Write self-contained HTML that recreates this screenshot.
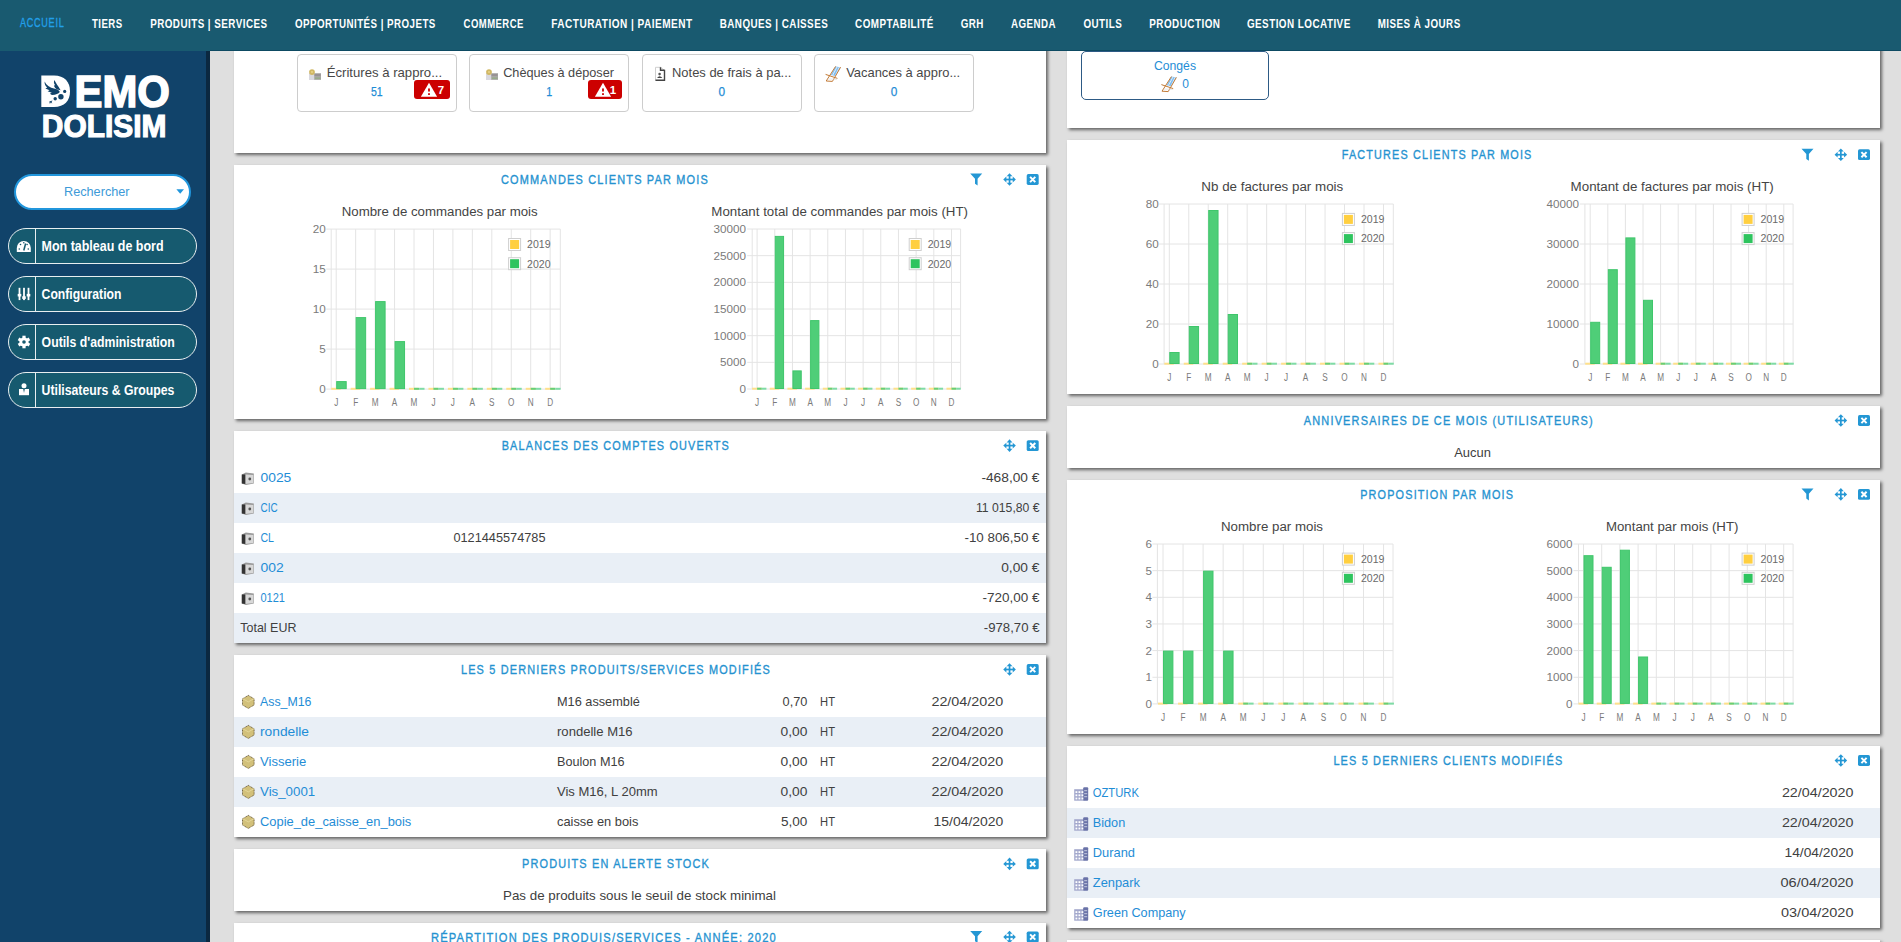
<!DOCTYPE html>
<html><head><meta charset="utf-8"><title>Dolibarr - Accueil</title>
<style>
html,body{margin:0;padding:0;}
body{width:1901px;height:942px;overflow:hidden;position:relative;background:#dfdfdf;font-family:"Liberation Sans", sans-serif;}
svg{position:absolute;left:0;top:0;z-index:10;}
svg text{font-family:"Liberation Sans", sans-serif;}
</style></head><body>
<div style="position:absolute;left:0px;top:0px;width:1901px;height:51px;box-sizing:border-box;background:#195a70;z-index:5;"></div><div style="position:absolute;left:210px;top:50px;width:1691px;height:1px;box-sizing:border-box;background:#0d4a62;z-index:5;"></div><div style="position:absolute;left:0px;top:51px;width:206px;height:891px;box-sizing:border-box;background:#11436a;"></div><div style="position:absolute;left:206px;top:51px;width:4px;height:891px;box-sizing:border-box;background:#0b2840;"></div>
<div style="position:absolute;left:14px;top:174px;width:177px;height:36px;box-sizing:border-box;border:2.5px solid #2196dc;border-radius:18px;background:#fff;"></div><div style="position:absolute;left:8px;top:228px;width:189px;height:36px;box-sizing:border-box;border:1.2px solid #e8eef0;border-radius:18px;background:#165a6f;"></div><div style="position:absolute;left:34.8px;top:229px;width:1.4px;height:34px;box-sizing:border-box;background:#e8eef0;"></div><div style="position:absolute;left:8px;top:276px;width:189px;height:36px;box-sizing:border-box;border:1.2px solid #e8eef0;border-radius:18px;background:#165a6f;"></div><div style="position:absolute;left:34.8px;top:277px;width:1.4px;height:34px;box-sizing:border-box;background:#e8eef0;"></div><div style="position:absolute;left:8px;top:324px;width:189px;height:36px;box-sizing:border-box;border:1.2px solid #e8eef0;border-radius:18px;background:#165a6f;"></div><div style="position:absolute;left:34.8px;top:325px;width:1.4px;height:34px;box-sizing:border-box;background:#e8eef0;"></div><div style="position:absolute;left:8px;top:372px;width:189px;height:36px;box-sizing:border-box;border:1.2px solid #e8eef0;border-radius:18px;background:#165a6f;"></div><div style="position:absolute;left:34.8px;top:373px;width:1.4px;height:34px;box-sizing:border-box;background:#e8eef0;"></div><div style="position:absolute;left:234px;top:-10px;width:812px;height:163px;box-sizing:border-box;background:#fff;box-shadow:2px 2px 3px rgba(0,0,0,0.55);"></div><div style="position:absolute;left:234px;top:165px;width:812px;height:254px;box-sizing:border-box;background:#fff;box-shadow:2px 2px 3px rgba(0,0,0,0.55);"></div><div style="position:absolute;left:234px;top:431px;width:812px;height:212px;box-sizing:border-box;background:#fff;box-shadow:2px 2px 3px rgba(0,0,0,0.55);"></div><div style="position:absolute;left:234px;top:655px;width:812px;height:182px;box-sizing:border-box;background:#fff;box-shadow:2px 2px 3px rgba(0,0,0,0.55);"></div><div style="position:absolute;left:234px;top:849px;width:812px;height:62px;box-sizing:border-box;background:#fff;box-shadow:2px 2px 3px rgba(0,0,0,0.55);"></div><div style="position:absolute;left:234px;top:923px;width:812px;height:40px;box-sizing:border-box;background:#fff;box-shadow:2px 2px 3px rgba(0,0,0,0.55);"></div><div style="position:absolute;left:1067px;top:-10px;width:813px;height:138px;box-sizing:border-box;background:#fff;box-shadow:2px 2px 3px rgba(0,0,0,0.55);"></div><div style="position:absolute;left:1067px;top:140px;width:813px;height:254px;box-sizing:border-box;background:#fff;box-shadow:2px 2px 3px rgba(0,0,0,0.55);"></div><div style="position:absolute;left:1067px;top:406px;width:813px;height:62px;box-sizing:border-box;background:#fff;box-shadow:2px 2px 3px rgba(0,0,0,0.55);"></div><div style="position:absolute;left:1067px;top:480px;width:813px;height:254px;box-sizing:border-box;background:#fff;box-shadow:2px 2px 3px rgba(0,0,0,0.55);"></div><div style="position:absolute;left:1067px;top:746px;width:813px;height:182px;box-sizing:border-box;background:#fff;box-shadow:2px 2px 3px rgba(0,0,0,0.55);"></div><div style="position:absolute;left:1067px;top:940px;width:813px;height:20px;box-sizing:border-box;background:#fff;box-shadow:2px 2px 3px rgba(0,0,0,0.55);"></div><div style="position:absolute;left:297.4px;top:54px;width:159.5px;height:57.5px;box-sizing:border-box;border:1px solid #cdcdcd;border-radius:4px;background:#fff;"></div><div style="position:absolute;left:414px;top:80px;width:36px;height:19px;border-radius:3px;background:#cc0000;"></div><div style="position:absolute;left:469.0px;top:54px;width:159.5px;height:57.5px;box-sizing:border-box;border:1px solid #cdcdcd;border-radius:4px;background:#fff;"></div><div style="position:absolute;left:588px;top:80px;width:33.89999999999998px;height:19px;border-radius:3px;background:#cc0000;"></div><div style="position:absolute;left:642.0px;top:54px;width:159.5px;height:57.5px;box-sizing:border-box;border:1px solid #cdcdcd;border-radius:4px;background:#fff;"></div><div style="position:absolute;left:814.0px;top:54px;width:159.5px;height:57.5px;box-sizing:border-box;border:1px solid #cdcdcd;border-radius:4px;background:#fff;"></div><div style="position:absolute;left:1081px;top:50.8px;width:188px;height:49px;box-sizing:border-box;border:1.5px solid #2d5a85;border-radius:5px;background:#fff;"></div><div style="position:absolute;left:234px;top:493px;width:812px;height:30px;box-sizing:border-box;background:#e9eff6;"></div><div style="position:absolute;left:234px;top:553px;width:812px;height:30px;box-sizing:border-box;background:#e9eff6;"></div><div style="position:absolute;left:234px;top:613px;width:812px;height:30px;box-sizing:border-box;background:#e9eff6;"></div><div style="position:absolute;left:234px;top:716.6px;width:812px;height:30px;box-sizing:border-box;background:#e9eff6;"></div><div style="position:absolute;left:234px;top:776.6px;width:812px;height:30px;box-sizing:border-box;background:#e9eff6;"></div><div style="position:absolute;left:1067px;top:808px;width:813px;height:30px;box-sizing:border-box;background:#e9eff6;"></div><div style="position:absolute;left:1067px;top:868px;width:813px;height:30px;box-sizing:border-box;background:#e9eff6;"></div>
<svg width="1901" height="942" viewBox="0 0 1901 942">
<text x="19.90" y="27.30" font-size="12" fill="#22a0ea" textLength="44.60" lengthAdjust="spacingAndGlyphs" letter-spacing="1" stroke="#22a0ea" stroke-width="0.3">ACCUEIL</text><text x="92.00" y="27.80" font-size="12.8" fill="#ffffff" font-weight="bold" textLength="30.60" lengthAdjust="spacingAndGlyphs" letter-spacing="0.6">TIERS</text><text x="150.20" y="27.80" font-size="12.8" fill="#ffffff" font-weight="bold" textLength="117.30" lengthAdjust="spacingAndGlyphs" letter-spacing="0.6">PRODUITS | SERVICES</text><text x="295.00" y="27.80" font-size="12.8" fill="#ffffff" font-weight="bold" textLength="140.80" lengthAdjust="spacingAndGlyphs" letter-spacing="0.6">OPPORTUNITÉS | PROJETS</text><text x="463.60" y="27.80" font-size="12.8" fill="#ffffff" font-weight="bold" textLength="60.20" lengthAdjust="spacingAndGlyphs" letter-spacing="0.6">COMMERCE</text><text x="551.30" y="27.80" font-size="12.8" fill="#ffffff" font-weight="bold" textLength="141.20" lengthAdjust="spacingAndGlyphs" letter-spacing="0.6">FACTURATION | PAIEMENT</text><text x="719.70" y="27.80" font-size="12.8" fill="#ffffff" font-weight="bold" textLength="108.50" lengthAdjust="spacingAndGlyphs" letter-spacing="0.6">BANQUES | CAISSES</text><text x="855.10" y="27.80" font-size="12.8" fill="#ffffff" font-weight="bold" textLength="78.70" lengthAdjust="spacingAndGlyphs" letter-spacing="0.6">COMPTABILITÉ</text><text x="960.70" y="27.80" font-size="12.8" fill="#ffffff" font-weight="bold" textLength="23.20" lengthAdjust="spacingAndGlyphs" letter-spacing="0.6">GRH</text><text x="1010.90" y="27.80" font-size="12.8" fill="#ffffff" font-weight="bold" textLength="45.00" lengthAdjust="spacingAndGlyphs" letter-spacing="0.6">AGENDA</text><text x="1083.40" y="27.80" font-size="12.8" fill="#ffffff" font-weight="bold" textLength="38.90" lengthAdjust="spacingAndGlyphs" letter-spacing="0.6">OUTILS</text><text x="1149.30" y="27.80" font-size="12.8" fill="#ffffff" font-weight="bold" textLength="71.10" lengthAdjust="spacingAndGlyphs" letter-spacing="0.6">PRODUCTION</text><text x="1246.90" y="27.80" font-size="12.8" fill="#ffffff" font-weight="bold" textLength="103.80" lengthAdjust="spacingAndGlyphs" letter-spacing="0.6">GESTION LOCATIVE</text><text x="1377.70" y="27.80" font-size="12.8" fill="#ffffff" font-weight="bold" textLength="83.00" lengthAdjust="spacingAndGlyphs" letter-spacing="0.6">MISES À JOURS</text><path d="M41.3 75.6 H54 C64.5 75.6 70 82 70 91.3 C70 100.8 64.5 107 54 107 H41.3 Z" fill="#fff"/><g fill="#11436a"><path d="M44.7 81.4 C46 85 49.5 87.5 55 88.8 C57.5 89.5 59.5 90.5 59.8 92 C58.5 93.8 56 94.9 52 94.9 L49.8 93.7 L51.8 92.8 L47.6 91.3 L49.6 90.3 L45.4 88.4 L47.2 87.6 C45.2 86 44.3 83.5 44.7 81.4 Z"/><path d="M54.4 80.1 C55.5 82.5 58 86 60.6 90.2 L57.3 89.5 C55.5 88.5 54.2 87 53.9 85.5 L55.2 85.2 C53.8 84 53.6 82 54.4 80.1 Z"/><circle cx="60.9" cy="96.7" r="2.7"/><circle cx="55.2" cy="98.7" r="1.7"/><circle cx="64.7" cy="91.4" r="1.6"/><path d="M49.3 101.6 L52.6 100.6 L51.5 101.9 L52.3 103.5 L50.6 102.5 L49.9 104 Z"/></g><text x="74.60" y="107.20" font-size="45" fill="#fff" font-weight="bold" textLength="95.30" lengthAdjust="spacingAndGlyphs" stroke="#fff" stroke-width="1.6">EMO</text><text x="41.80" y="137.00" font-size="32" fill="#fff" font-weight="bold" textLength="124.60" lengthAdjust="spacingAndGlyphs" stroke="#fff" stroke-width="1.2">DOLISIM</text><text x="64.00" y="196.30" font-size="13" fill="#3d9ad8" textLength="65.60" lengthAdjust="spacingAndGlyphs" >Rechercher</text><path d="M176.4 189.2 L184 189.2 L180.2 193.8 Z" fill="#2196dc"/><text x="41.60" y="250.80" font-size="14" fill="#fff" font-weight="bold" textLength="121.90" lengthAdjust="spacingAndGlyphs" >Mon tableau de bord</text><path d="M16.8 252 V248 A7 7 0 0 1 30.8 248 V252 Z" fill="#fff"/><path d="M23.8 250.5 L25.6 243.5" stroke="#165a6f" stroke-width="1.5"/><circle cx="19.3" cy="249" r="0.8" fill="#165a6f"/><circle cx="28.3" cy="249" r="0.8" fill="#165a6f"/><circle cx="20.5" cy="244.5" r="0.8" fill="#165a6f"/><circle cx="23.8" cy="242.8" r="0.8" fill="#165a6f"/><circle cx="27.1" cy="244.5" r="0.8" fill="#165a6f"/><text x="41.60" y="298.80" font-size="14" fill="#fff" font-weight="bold" textLength="79.80" lengthAdjust="spacingAndGlyphs" >Configuration</text><rect x="18.6" y="287.8" width="1.8" height="12.3" fill="#fff"/><rect x="17.7" y="293.9" width="3.6" height="2.6" fill="#fff"/><rect x="23.1" y="287.8" width="1.8" height="12.3" fill="#fff"/><rect x="22.2" y="296.3" width="3.6" height="2.6" fill="#fff"/><rect x="27.6" y="287.8" width="1.8" height="12.3" fill="#fff"/><rect x="26.7" y="293.9" width="3.6" height="2.6" fill="#fff"/><text x="41.60" y="346.80" font-size="14" fill="#fff" font-weight="bold" textLength="133.10" lengthAdjust="spacingAndGlyphs" >Outils d'administration</text><rect x="22.4" y="335.7" width="3.2" height="3" fill="#fff" transform="rotate(0 24 342)"/><rect x="22.4" y="335.7" width="3.2" height="3" fill="#fff" transform="rotate(60 24 342)"/><rect x="22.4" y="335.7" width="3.2" height="3" fill="#fff" transform="rotate(120 24 342)"/><rect x="22.4" y="335.7" width="3.2" height="3" fill="#fff" transform="rotate(180 24 342)"/><rect x="22.4" y="335.7" width="3.2" height="3" fill="#fff" transform="rotate(240 24 342)"/><rect x="22.4" y="335.7" width="3.2" height="3" fill="#fff" transform="rotate(300 24 342)"/><circle cx="24" cy="342" r="4.6" fill="#fff"/><circle cx="24" cy="342" r="1.8" fill="#165a6f"/><text x="41.60" y="394.80" font-size="14" fill="#fff" font-weight="bold" textLength="132.80" lengthAdjust="spacingAndGlyphs" >Utilisateurs &amp; Groupes</text><circle cx="24" cy="385.7" r="2.5" fill="#fff"/><path d="M19 389 H29 V395.2 H19 Z" fill="#fff"/><path d="M23.2 389 L24 393 L24.8 389 Z" fill="#165a6f"/><text x="326.70" y="77.00" font-size="12.8" fill="#474747" textLength="115.40" lengthAdjust="spacingAndGlyphs" >Écritures à rappro...</text><text x="371.00" y="96.40" font-size="13.2" fill="#1f8dd6" textLength="11.70" lengthAdjust="spacingAndGlyphs" stroke="#1f8dd6" stroke-width="0.25">51</text><path d="M429 82.8 L437.1 96.8 L420.9 96.8 Z" fill="#fff"/><rect x="428.1" y="88.2" width="1.8" height="3.6" rx="0.8" fill="#c00"/><rect x="428.1" y="93.2" width="1.8" height="1.8" fill="#c00"/><text x="441.00" y="93.80" font-size="11.5" fill="#fff" font-weight="bold" text-anchor="middle" >7</text><rect x="309" y="73.0" width="12" height="7" fill="#d9d9e0"/><rect x="314.2" y="73.3" width="6.8" height="6.5" fill="#a7a7a4"/><rect x="314.5" y="74.5" width="6" height="1" fill="#8a7f86"/><rect x="315" y="77.5" width="5.5" height="1.5" fill="#97ab8a"/><circle cx="312" cy="72.1" r="2.9" fill="#d1b865"/><circle cx="312" cy="72.1" r="1" fill="#e8d58a"/><text x="503.20" y="77.00" font-size="12.8" fill="#474747" textLength="110.80" lengthAdjust="spacingAndGlyphs" >Chèques à déposer</text><text x="546.30" y="96.40" font-size="13.2" fill="#1f8dd6" textLength="6.00" lengthAdjust="spacingAndGlyphs" stroke="#1f8dd6" stroke-width="0.25">1</text><path d="M603 82.8 L611.1 96.8 L594.9 96.8 Z" fill="#fff"/><rect x="602.1" y="88.2" width="1.8" height="3.6" rx="0.8" fill="#c00"/><rect x="602.1" y="93.2" width="1.8" height="1.8" fill="#c00"/><text x="612.90" y="93.80" font-size="11.5" fill="#fff" font-weight="bold" text-anchor="middle" >1</text><rect x="486" y="73.0" width="12" height="7" fill="#d9d9e0"/><rect x="491.2" y="73.3" width="6.8" height="6.5" fill="#a7a7a4"/><rect x="491.5" y="74.5" width="6" height="1" fill="#8a7f86"/><rect x="492" y="77.5" width="5.5" height="1.5" fill="#97ab8a"/><circle cx="489" cy="72.1" r="2.9" fill="#d1b865"/><circle cx="489" cy="72.1" r="1" fill="#e8d58a"/><text x="672.00" y="77.00" font-size="12.8" fill="#474747" textLength="119.40" lengthAdjust="spacingAndGlyphs" >Notes de frais à pa...</text><text x="718.40" y="96.40" font-size="13.2" fill="#1f8dd6" textLength="6.60" lengthAdjust="spacingAndGlyphs" stroke="#1f8dd6" stroke-width="0.25">0</text><path d="M655.5 67.3 H660.5 L664.5 70.3 V80.3 H655.5 Z" fill="#fff" stroke="#cfcfcf" stroke-width="1"/><path d="M660.5 67.3 V70.3 H664.5 M664.5 69.8 V80.3 H655.5" fill="none" stroke="#444" stroke-width="1.4"/><circle cx="659.6" cy="74.1" r="1.3" fill="#555"/><path d="M657 78.0 Q659.6 74.6 662.4 78.0 Z" fill="#444"/><text x="846.20" y="77.00" font-size="12.8" fill="#474747" textLength="114.00" lengthAdjust="spacingAndGlyphs" >Vacances à appro...</text><text x="890.80" y="96.40" font-size="13.2" fill="#1f8dd6" textLength="6.60" lengthAdjust="spacingAndGlyphs" stroke="#1f8dd6" stroke-width="0.25">0</text><g transform="translate(825 65.8) scale(1.0)"><path d="M5.8 9.2 L10.6 0.6 L15.6 1.4 L10.4 10.2 Z" fill="#7fbdf0"/><path d="M7.6 9.5 L12.2 0.9 M10.4 9.9 L14.4 1.2" stroke="#e6f3fd" stroke-width="0.9"/><path d="M10.6 0.6 L1.2 15.2 M15.6 1.4 L7.4 15.6 M1.2 15.2 L7.4 15.6 M0.6 8.6 L12.4 12.6" stroke="#c27a36" stroke-width="1" fill="none"/><path d="M3 13 L12 13.5" stroke="#ddd" stroke-width="1.2" opacity="0.6"/></g><text x="1153.90" y="70.00" font-size="13" fill="#1f8dd6" textLength="42.10" lengthAdjust="spacingAndGlyphs" >Congés</text><text x="1182.30" y="87.60" font-size="13" fill="#1f8dd6" textLength="6.70" lengthAdjust="spacingAndGlyphs" >0</text><g transform="translate(1160.8 76) scale(1.0)"><path d="M5.8 9.2 L10.6 0.6 L15.6 1.4 L10.4 10.2 Z" fill="#7fbdf0"/><path d="M7.6 9.5 L12.2 0.9 M10.4 9.9 L14.4 1.2" stroke="#e6f3fd" stroke-width="0.9"/><path d="M10.6 0.6 L1.2 15.2 M15.6 1.4 L7.4 15.6 M1.2 15.2 L7.4 15.6 M0.6 8.6 L12.4 12.6" stroke="#c27a36" stroke-width="1" fill="none"/><path d="M3 13 L12 13.5" stroke="#ddd" stroke-width="1.2" opacity="0.6"/></g><text x="501.00" y="184.00" font-size="13" fill="#2592d0" textLength="208.00" lengthAdjust="spacingAndGlyphs" letter-spacing="1.4" stroke="#2592d0" stroke-width="0.35">COMMANDES CLIENTS PAR MOIS</text><rect x="1026.7" y="174.1" width="12" height="10.8" rx="1.6" fill="#2497d4"/><path d="M1030.1000000000001 176.9 L1035.3 182.1 M1035.3 176.9 L1030.1000000000001 182.1" stroke="#fff" stroke-width="2"/><g fill="#2497d4"><rect x="1008.7" y="175.5" width="1.7" height="8"/><rect x="1005.5500000000001" y="178.65" width="8" height="1.7"/><path d="M1009.5500000000001 173.2 l2.9 3.1 h-5.8 Z"/><path d="M1009.5500000000001 185.8 l2.9 -3.1 h-5.8 Z"/><path d="M1003.2500000000001 179.5 l3.1 2.9 v-5.8 Z"/><path d="M1015.85 179.5 l-3.1 2.9 v-5.8 Z"/></g><path d="M970.2 173.5 h12 l-4.6 5.3 v6.8 l-2.6 -1.9 v-4.9 Z" fill="#2497d4"/><line x1="326.2" y1="389.10" x2="560.3" y2="389.10" stroke="#e4e4e4" stroke-width="1"/><text x="325.70" y="393.00" font-size="10.8" fill="#7a7a7a" text-anchor="end" textLength="6.5" lengthAdjust="spacingAndGlyphs">0</text><line x1="326.2" y1="349.10" x2="560.3" y2="349.10" stroke="#e4e4e4" stroke-width="1"/><text x="325.70" y="353.00" font-size="10.8" fill="#7a7a7a" text-anchor="end" textLength="6.5" lengthAdjust="spacingAndGlyphs">5</text><line x1="326.2" y1="309.10" x2="560.3" y2="309.10" stroke="#e4e4e4" stroke-width="1"/><text x="325.70" y="313.00" font-size="10.8" fill="#7a7a7a" text-anchor="end" textLength="13.0" lengthAdjust="spacingAndGlyphs">10</text><line x1="326.2" y1="269.10" x2="560.3" y2="269.10" stroke="#e4e4e4" stroke-width="1"/><text x="325.70" y="273.00" font-size="10.8" fill="#7a7a7a" text-anchor="end" textLength="13.0" lengthAdjust="spacingAndGlyphs">15</text><line x1="326.2" y1="229.10" x2="560.3" y2="229.10" stroke="#e4e4e4" stroke-width="1"/><text x="325.70" y="233.00" font-size="10.8" fill="#7a7a7a" text-anchor="end" textLength="13.0" lengthAdjust="spacingAndGlyphs">20</text><line x1="331.2" y1="229.1" x2="331.2" y2="389.1" stroke="#e4e4e4"/><line x1="560.3" y1="229.1" x2="560.3" y2="389.1" stroke="#e4e4e4"/><line x1="336.20" y1="229.1" x2="336.20" y2="389.1" stroke="#e4e4e4"/><text x="336.20" y="406.30" font-size="10" fill="#7a7a7a" text-anchor="middle" textLength="4.10" lengthAdjust="spacingAndGlyphs">J</text><line x1="355.65" y1="229.1" x2="355.65" y2="389.1" stroke="#e4e4e4"/><text x="355.65" y="406.30" font-size="10" fill="#7a7a7a" text-anchor="middle" textLength="5.01" lengthAdjust="spacingAndGlyphs">F</text><line x1="375.10" y1="229.1" x2="375.10" y2="389.1" stroke="#e4e4e4"/><text x="375.10" y="406.30" font-size="10" fill="#7a7a7a" text-anchor="middle" textLength="6.83" lengthAdjust="spacingAndGlyphs">M</text><line x1="394.55" y1="229.1" x2="394.55" y2="389.1" stroke="#e4e4e4"/><text x="394.55" y="406.30" font-size="10" fill="#7a7a7a" text-anchor="middle" textLength="5.47" lengthAdjust="spacingAndGlyphs">A</text><line x1="414.00" y1="229.1" x2="414.00" y2="389.1" stroke="#e4e4e4"/><text x="414.00" y="406.30" font-size="10" fill="#7a7a7a" text-anchor="middle" textLength="6.83" lengthAdjust="spacingAndGlyphs">M</text><line x1="433.45" y1="229.1" x2="433.45" y2="389.1" stroke="#e4e4e4"/><text x="433.45" y="406.30" font-size="10" fill="#7a7a7a" text-anchor="middle" textLength="4.10" lengthAdjust="spacingAndGlyphs">J</text><line x1="452.90" y1="229.1" x2="452.90" y2="389.1" stroke="#e4e4e4"/><text x="452.90" y="406.30" font-size="10" fill="#7a7a7a" text-anchor="middle" textLength="4.10" lengthAdjust="spacingAndGlyphs">J</text><line x1="472.35" y1="229.1" x2="472.35" y2="389.1" stroke="#e4e4e4"/><text x="472.35" y="406.30" font-size="10" fill="#7a7a7a" text-anchor="middle" textLength="5.47" lengthAdjust="spacingAndGlyphs">A</text><line x1="491.80" y1="229.1" x2="491.80" y2="389.1" stroke="#e4e4e4"/><text x="491.80" y="406.30" font-size="10" fill="#7a7a7a" text-anchor="middle" textLength="5.47" lengthAdjust="spacingAndGlyphs">S</text><line x1="511.25" y1="229.1" x2="511.25" y2="389.1" stroke="#e4e4e4"/><text x="511.25" y="406.30" font-size="10" fill="#7a7a7a" text-anchor="middle" textLength="6.38" lengthAdjust="spacingAndGlyphs">O</text><line x1="530.70" y1="229.1" x2="530.70" y2="389.1" stroke="#e4e4e4"/><text x="530.70" y="406.30" font-size="10" fill="#7a7a7a" text-anchor="middle" textLength="5.92" lengthAdjust="spacingAndGlyphs">N</text><line x1="550.15" y1="229.1" x2="550.15" y2="389.1" stroke="#e4e4e4"/><text x="550.15" y="406.30" font-size="10" fill="#7a7a7a" text-anchor="middle" textLength="5.92" lengthAdjust="spacingAndGlyphs">D</text><rect x="331.20" y="387.80" width="9.5" height="2" fill="#ffe08a"/><rect x="336.70" y="381.60" width="9.50" height="7.00" fill="#4fce78" stroke="#3fc66b" stroke-width="1"/><rect x="350.65" y="387.80" width="9.5" height="2" fill="#ffe08a"/><rect x="356.15" y="317.60" width="9.50" height="71.00" fill="#4fce78" stroke="#3fc66b" stroke-width="1"/><rect x="370.10" y="387.80" width="9.5" height="2" fill="#ffe08a"/><rect x="375.60" y="301.60" width="9.50" height="87.00" fill="#4fce78" stroke="#3fc66b" stroke-width="1"/><rect x="389.55" y="387.80" width="9.5" height="2" fill="#ffe08a"/><rect x="395.05" y="341.60" width="9.50" height="47.00" fill="#4fce78" stroke="#3fc66b" stroke-width="1"/><rect x="409.00" y="387.80" width="9.5" height="2" fill="#ffe08a"/><rect x="414.00" y="387.80" width="5.25" height="2" fill="#66cf78"/><rect x="419.25" y="387.80" width="5.25" height="2" fill="#7fdca6"/><rect x="428.45" y="387.80" width="9.5" height="2" fill="#ffe08a"/><rect x="433.45" y="387.80" width="5.25" height="2" fill="#66cf78"/><rect x="438.70" y="387.80" width="5.25" height="2" fill="#7fdca6"/><rect x="447.90" y="387.80" width="9.5" height="2" fill="#ffe08a"/><rect x="452.90" y="387.80" width="5.25" height="2" fill="#66cf78"/><rect x="458.15" y="387.80" width="5.25" height="2" fill="#7fdca6"/><rect x="467.35" y="387.80" width="9.5" height="2" fill="#ffe08a"/><rect x="472.35" y="387.80" width="5.25" height="2" fill="#66cf78"/><rect x="477.60" y="387.80" width="5.25" height="2" fill="#7fdca6"/><rect x="486.80" y="387.80" width="9.5" height="2" fill="#ffe08a"/><rect x="491.80" y="387.80" width="5.25" height="2" fill="#66cf78"/><rect x="497.05" y="387.80" width="5.25" height="2" fill="#7fdca6"/><rect x="506.25" y="387.80" width="9.5" height="2" fill="#ffe08a"/><rect x="511.25" y="387.80" width="5.25" height="2" fill="#66cf78"/><rect x="516.50" y="387.80" width="5.25" height="2" fill="#7fdca6"/><rect x="525.70" y="387.80" width="9.5" height="2" fill="#ffe08a"/><rect x="530.70" y="387.80" width="5.25" height="2" fill="#66cf78"/><rect x="535.95" y="387.80" width="5.25" height="2" fill="#7fdca6"/><rect x="545.15" y="387.80" width="9.5" height="2" fill="#ffe08a"/><rect x="550.15" y="387.80" width="5.25" height="2" fill="#66cf78"/><rect x="555.40" y="387.80" width="5.25" height="2" fill="#7fdca6"/><rect x="508.6" y="238.5" width="12" height="12" fill="#fff" stroke="#cfcfcf"/><rect x="510.1" y="240.0" width="9" height="9" fill="#ffcf40"/><text x="527.1" y="248.3" font-size="10.5" fill="#6a6a6a" textLength="23.5" lengthAdjust="spacingAndGlyphs">2019</text><rect x="508.6" y="257.7" width="12" height="12" fill="#fff" stroke="#cfcfcf"/><rect x="510.1" y="259.2" width="9" height="9" fill="#2ec45e"/><text x="527.1" y="267.5" font-size="10.5" fill="#6a6a6a" textLength="23.5" lengthAdjust="spacingAndGlyphs">2020</text><text x="341.75" y="216.30" font-size="12.5" fill="#444" textLength="195.9" lengthAdjust="spacingAndGlyphs">Nombre de commandes par mois</text><line x1="747.2" y1="389.00" x2="960.6" y2="389.00" stroke="#e4e4e4" stroke-width="1"/><text x="746.00" y="392.90" font-size="10.8" fill="#7a7a7a" text-anchor="end" textLength="6.5" lengthAdjust="spacingAndGlyphs">0</text><line x1="747.2" y1="362.33" x2="960.6" y2="362.33" stroke="#e4e4e4" stroke-width="1"/><text x="746.00" y="366.23" font-size="10.8" fill="#7a7a7a" text-anchor="end" textLength="26.0" lengthAdjust="spacingAndGlyphs">5000</text><line x1="747.2" y1="335.67" x2="960.6" y2="335.67" stroke="#e4e4e4" stroke-width="1"/><text x="746.00" y="339.57" font-size="10.8" fill="#7a7a7a" text-anchor="end" textLength="32.5" lengthAdjust="spacingAndGlyphs">10000</text><line x1="747.2" y1="309.00" x2="960.6" y2="309.00" stroke="#e4e4e4" stroke-width="1"/><text x="746.00" y="312.90" font-size="10.8" fill="#7a7a7a" text-anchor="end" textLength="32.5" lengthAdjust="spacingAndGlyphs">15000</text><line x1="747.2" y1="282.33" x2="960.6" y2="282.33" stroke="#e4e4e4" stroke-width="1"/><text x="746.00" y="286.23" font-size="10.8" fill="#7a7a7a" text-anchor="end" textLength="32.5" lengthAdjust="spacingAndGlyphs">20000</text><line x1="747.2" y1="255.67" x2="960.6" y2="255.67" stroke="#e4e4e4" stroke-width="1"/><text x="746.00" y="259.57" font-size="10.8" fill="#7a7a7a" text-anchor="end" textLength="32.5" lengthAdjust="spacingAndGlyphs">25000</text><line x1="747.2" y1="229.00" x2="960.6" y2="229.00" stroke="#e4e4e4" stroke-width="1"/><text x="746.00" y="232.90" font-size="10.8" fill="#7a7a7a" text-anchor="end" textLength="32.5" lengthAdjust="spacingAndGlyphs">30000</text><line x1="752.2" y1="229" x2="752.2" y2="389" stroke="#e4e4e4"/><line x1="960.6" y1="229" x2="960.6" y2="389" stroke="#e4e4e4"/><line x1="757.10" y1="229" x2="757.10" y2="389" stroke="#e4e4e4"/><text x="757.10" y="406.30" font-size="10" fill="#7a7a7a" text-anchor="middle" textLength="4.10" lengthAdjust="spacingAndGlyphs">J</text><line x1="774.77" y1="229" x2="774.77" y2="389" stroke="#e4e4e4"/><text x="774.77" y="406.30" font-size="10" fill="#7a7a7a" text-anchor="middle" textLength="5.01" lengthAdjust="spacingAndGlyphs">F</text><line x1="792.44" y1="229" x2="792.44" y2="389" stroke="#e4e4e4"/><text x="792.44" y="406.30" font-size="10" fill="#7a7a7a" text-anchor="middle" textLength="6.83" lengthAdjust="spacingAndGlyphs">M</text><line x1="810.11" y1="229" x2="810.11" y2="389" stroke="#e4e4e4"/><text x="810.11" y="406.30" font-size="10" fill="#7a7a7a" text-anchor="middle" textLength="5.47" lengthAdjust="spacingAndGlyphs">A</text><line x1="827.78" y1="229" x2="827.78" y2="389" stroke="#e4e4e4"/><text x="827.78" y="406.30" font-size="10" fill="#7a7a7a" text-anchor="middle" textLength="6.83" lengthAdjust="spacingAndGlyphs">M</text><line x1="845.45" y1="229" x2="845.45" y2="389" stroke="#e4e4e4"/><text x="845.45" y="406.30" font-size="10" fill="#7a7a7a" text-anchor="middle" textLength="4.10" lengthAdjust="spacingAndGlyphs">J</text><line x1="863.12" y1="229" x2="863.12" y2="389" stroke="#e4e4e4"/><text x="863.12" y="406.30" font-size="10" fill="#7a7a7a" text-anchor="middle" textLength="4.10" lengthAdjust="spacingAndGlyphs">J</text><line x1="880.79" y1="229" x2="880.79" y2="389" stroke="#e4e4e4"/><text x="880.79" y="406.30" font-size="10" fill="#7a7a7a" text-anchor="middle" textLength="5.47" lengthAdjust="spacingAndGlyphs">A</text><line x1="898.46" y1="229" x2="898.46" y2="389" stroke="#e4e4e4"/><text x="898.46" y="406.30" font-size="10" fill="#7a7a7a" text-anchor="middle" textLength="5.47" lengthAdjust="spacingAndGlyphs">S</text><line x1="916.13" y1="229" x2="916.13" y2="389" stroke="#e4e4e4"/><text x="916.13" y="406.30" font-size="10" fill="#7a7a7a" text-anchor="middle" textLength="6.38" lengthAdjust="spacingAndGlyphs">O</text><line x1="933.80" y1="229" x2="933.80" y2="389" stroke="#e4e4e4"/><text x="933.80" y="406.30" font-size="10" fill="#7a7a7a" text-anchor="middle" textLength="5.92" lengthAdjust="spacingAndGlyphs">N</text><line x1="951.47" y1="229" x2="951.47" y2="389" stroke="#e4e4e4"/><text x="951.47" y="406.30" font-size="10" fill="#7a7a7a" text-anchor="middle" textLength="5.92" lengthAdjust="spacingAndGlyphs">D</text><rect x="752.10" y="387.70" width="9.5" height="2" fill="#ffe08a"/><rect x="757.10" y="387.70" width="4.65" height="2" fill="#66cf78"/><rect x="761.75" y="387.70" width="4.65" height="2" fill="#7fdca6"/><rect x="769.77" y="387.70" width="9.5" height="2" fill="#ffe08a"/><rect x="775.27" y="236.40" width="8.30" height="152.10" fill="#4fce78" stroke="#3fc66b" stroke-width="1"/><rect x="787.44" y="387.70" width="9.5" height="2" fill="#ffe08a"/><rect x="792.94" y="370.90" width="8.30" height="17.60" fill="#4fce78" stroke="#3fc66b" stroke-width="1"/><rect x="805.11" y="387.70" width="9.5" height="2" fill="#ffe08a"/><rect x="810.61" y="320.60" width="8.30" height="67.90" fill="#4fce78" stroke="#3fc66b" stroke-width="1"/><rect x="822.78" y="387.70" width="9.5" height="2" fill="#ffe08a"/><rect x="827.78" y="387.70" width="4.65" height="2" fill="#66cf78"/><rect x="832.43" y="387.70" width="4.65" height="2" fill="#7fdca6"/><rect x="840.45" y="387.70" width="9.5" height="2" fill="#ffe08a"/><rect x="845.45" y="387.70" width="4.65" height="2" fill="#66cf78"/><rect x="850.10" y="387.70" width="4.65" height="2" fill="#7fdca6"/><rect x="858.12" y="387.70" width="9.5" height="2" fill="#ffe08a"/><rect x="863.12" y="387.70" width="4.65" height="2" fill="#66cf78"/><rect x="867.77" y="387.70" width="4.65" height="2" fill="#7fdca6"/><rect x="875.79" y="387.70" width="9.5" height="2" fill="#ffe08a"/><rect x="880.79" y="387.70" width="4.65" height="2" fill="#66cf78"/><rect x="885.44" y="387.70" width="4.65" height="2" fill="#7fdca6"/><rect x="893.46" y="387.70" width="9.5" height="2" fill="#ffe08a"/><rect x="898.46" y="387.70" width="4.65" height="2" fill="#66cf78"/><rect x="903.11" y="387.70" width="4.65" height="2" fill="#7fdca6"/><rect x="911.13" y="387.70" width="9.5" height="2" fill="#ffe08a"/><rect x="916.13" y="387.70" width="4.65" height="2" fill="#66cf78"/><rect x="920.78" y="387.70" width="4.65" height="2" fill="#7fdca6"/><rect x="928.80" y="387.70" width="9.5" height="2" fill="#ffe08a"/><rect x="933.80" y="387.70" width="4.65" height="2" fill="#66cf78"/><rect x="938.45" y="387.70" width="4.65" height="2" fill="#7fdca6"/><rect x="946.47" y="387.70" width="9.5" height="2" fill="#ffe08a"/><rect x="951.47" y="387.70" width="4.65" height="2" fill="#66cf78"/><rect x="956.12" y="387.70" width="4.65" height="2" fill="#7fdca6"/><rect x="909.2" y="238.5" width="12" height="12" fill="#fff" stroke="#cfcfcf"/><rect x="910.7" y="240.0" width="9" height="9" fill="#ffcf40"/><text x="927.7" y="248.3" font-size="10.5" fill="#6a6a6a" textLength="23.5" lengthAdjust="spacingAndGlyphs">2019</text><rect x="909.2" y="257.7" width="12" height="12" fill="#fff" stroke="#cfcfcf"/><rect x="910.7" y="259.2" width="9" height="9" fill="#2ec45e"/><text x="927.7" y="267.5" font-size="10.5" fill="#6a6a6a" textLength="23.5" lengthAdjust="spacingAndGlyphs">2020</text><text x="711.35" y="216.30" font-size="12.5" fill="#444" textLength="256.7" lengthAdjust="spacingAndGlyphs">Montant total de commandes par mois (HT)</text><text x="501.70" y="450.20" font-size="13" fill="#2592d0" textLength="228.30" lengthAdjust="spacingAndGlyphs" letter-spacing="1.4" stroke="#2592d0" stroke-width="0.35">BALANCES DES COMPTES OUVERTS</text><rect x="1026.7" y="440.20000000000005" width="12" height="10.8" rx="1.6" fill="#2497d4"/><path d="M1030.1000000000001 443.00000000000006 L1035.3 448.20000000000005 M1035.3 443.00000000000006 L1030.1000000000001 448.20000000000005" stroke="#fff" stroke-width="2"/><g fill="#2497d4"><rect x="1008.7" y="441.6" width="1.7" height="8"/><rect x="1005.5500000000001" y="444.75" width="8" height="1.7"/><path d="M1009.5500000000001 439.3 l2.9 3.1 h-5.8 Z"/><path d="M1009.5500000000001 451.90000000000003 l2.9 -3.1 h-5.8 Z"/><path d="M1003.2500000000001 445.6 l3.1 2.9 v-5.8 Z"/><path d="M1015.85 445.6 l-3.1 2.9 v-5.8 Z"/></g><path d="M241.8 474.5 L245.8 472.5 L253.8 473.5 L253.8 483.5 L245.8 485.0 L241.8 483.5 Z" fill="#9a9a9a"/><path d="M245.3 474.5 L253.3 475.0 L253.3 483.0 L245.3 484.0 Z" fill="#d8d8d8"/><path d="M241.8 474.5 L245.3 474.5 L245.3 484.0 L241.8 483.5 Z" fill="#333"/><circle cx="249.8" cy="479.0" r="1.4" fill="#555"/><text x="260.50" y="482.20" font-size="13.5" fill="#1f8dd6" textLength="30.80" lengthAdjust="spacingAndGlyphs" >0025</text><text x="1039.50" y="482.20" font-size="13" fill="#404040" text-anchor="end" textLength="58.10" lengthAdjust="spacingAndGlyphs" >-468,00 €</text><path d="M241.8 504.5 L245.8 502.5 L253.8 503.5 L253.8 513.5 L245.8 515.0 L241.8 513.5 Z" fill="#9a9a9a"/><path d="M245.3 504.5 L253.3 505.0 L253.3 513.0 L245.3 514.0 Z" fill="#d8d8d8"/><path d="M241.8 504.5 L245.3 504.5 L245.3 514.0 L241.8 513.5 Z" fill="#333"/><circle cx="249.8" cy="509.0" r="1.4" fill="#555"/><text x="260.50" y="512.20" font-size="13.5" fill="#1f8dd6" textLength="17.10" lengthAdjust="spacingAndGlyphs" >CIC</text><text x="1039.50" y="512.20" font-size="13" fill="#404040" text-anchor="end" textLength="63.50" lengthAdjust="spacingAndGlyphs" >11 015,80 €</text><path d="M241.8 534.5 L245.8 532.5 L253.8 533.5 L253.8 543.5 L245.8 545.0 L241.8 543.5 Z" fill="#9a9a9a"/><path d="M245.3 534.5 L253.3 535.0 L253.3 543.0 L245.3 544.0 Z" fill="#d8d8d8"/><path d="M241.8 534.5 L245.3 534.5 L245.3 544.0 L241.8 543.5 Z" fill="#333"/><circle cx="249.8" cy="539.0" r="1.4" fill="#555"/><text x="260.50" y="542.20" font-size="13.5" fill="#1f8dd6" textLength="13.50" lengthAdjust="spacingAndGlyphs" >CL</text><text x="453.40" y="542.20" font-size="13" fill="#404040" textLength="92.10" lengthAdjust="spacingAndGlyphs" >0121445574785</text><text x="1039.50" y="542.20" font-size="13" fill="#404040" text-anchor="end" textLength="75.00" lengthAdjust="spacingAndGlyphs" >-10 806,50 €</text><path d="M241.8 564.5 L245.8 562.5 L253.8 563.5 L253.8 573.5 L245.8 575.0 L241.8 573.5 Z" fill="#9a9a9a"/><path d="M245.3 564.5 L253.3 565.0 L253.3 573.0 L245.3 574.0 Z" fill="#d8d8d8"/><path d="M241.8 564.5 L245.3 564.5 L245.3 574.0 L241.8 573.5 Z" fill="#333"/><circle cx="249.8" cy="569.0" r="1.4" fill="#555"/><text x="260.50" y="572.20" font-size="13.5" fill="#1f8dd6" textLength="23.20" lengthAdjust="spacingAndGlyphs" >002</text><text x="1039.50" y="572.20" font-size="13" fill="#404040" text-anchor="end" textLength="38.30" lengthAdjust="spacingAndGlyphs" >0,00 €</text><path d="M241.8 594.5 L245.8 592.5 L253.8 593.5 L253.8 603.5 L245.8 605.0 L241.8 603.5 Z" fill="#9a9a9a"/><path d="M245.3 594.5 L253.3 595.0 L253.3 603.0 L245.3 604.0 Z" fill="#d8d8d8"/><path d="M241.8 594.5 L245.3 594.5 L245.3 604.0 L241.8 603.5 Z" fill="#333"/><circle cx="249.8" cy="599.0" r="1.4" fill="#555"/><text x="260.50" y="602.20" font-size="13.5" fill="#1f8dd6" textLength="24.50" lengthAdjust="spacingAndGlyphs" >0121</text><text x="1039.50" y="602.20" font-size="13" fill="#404040" text-anchor="end" textLength="56.90" lengthAdjust="spacingAndGlyphs" >-720,00 €</text><text x="240.30" y="632.40" font-size="13" fill="#404040" textLength="56.10" lengthAdjust="spacingAndGlyphs" >Total EUR</text><text x="1039.50" y="632.40" font-size="13" fill="#404040" text-anchor="end" textLength="55.70" lengthAdjust="spacingAndGlyphs" >-978,70 €</text><text x="460.90" y="674.00" font-size="13" fill="#2592d0" textLength="310.10" lengthAdjust="spacingAndGlyphs" letter-spacing="1.4" stroke="#2592d0" stroke-width="0.35">LES 5 DERNIERS PRODUITS/SERVICES MODIFIÉS</text><rect x="1026.7" y="664.1" width="12" height="10.8" rx="1.6" fill="#2497d4"/><path d="M1030.1000000000001 666.9 L1035.3 672.1 M1035.3 666.9 L1030.1000000000001 672.1" stroke="#fff" stroke-width="2"/><g fill="#2497d4"><rect x="1008.7" y="665.5" width="1.7" height="8"/><rect x="1005.5500000000001" y="668.65" width="8" height="1.7"/><path d="M1009.5500000000001 663.2 l2.9 3.1 h-5.8 Z"/><path d="M1009.5500000000001 675.8 l2.9 -3.1 h-5.8 Z"/><path d="M1003.2500000000001 669.5 l3.1 2.9 v-5.8 Z"/><path d="M1015.85 669.5 l-3.1 2.9 v-5.8 Z"/></g><path d="M248.3 695.4 L254.10000000000002 698.8 V705.0 L248.3 708.4 L242.5 705.0 V698.8 Z" fill="#d2c07a" stroke="#5a4a2a" stroke-width="0.8" stroke-dasharray="1 0.6"/><path d="M242.9 698.8 L248.3 701.9 L253.70000000000002 698.8" stroke="#e9dca0" stroke-width="0.8" fill="none"/><text x="260.00" y="705.80" font-size="13" fill="#1f8dd6" textLength="51.50" lengthAdjust="spacingAndGlyphs" >Ass_M16</text><text x="557.00" y="705.80" font-size="13" fill="#404040" textLength="82.80" lengthAdjust="spacingAndGlyphs" >M16 assemblé</text><text x="807.40" y="705.80" font-size="13" fill="#404040" text-anchor="end" textLength="24.80" lengthAdjust="spacingAndGlyphs" >0,70</text><text x="820.10" y="705.80" font-size="13" fill="#404040" textLength="14.90" lengthAdjust="spacingAndGlyphs" >HT</text><text x="1003.30" y="705.80" font-size="13" fill="#404040" text-anchor="end" textLength="71.90" lengthAdjust="spacingAndGlyphs" >22/04/2020</text><path d="M248.3 725.4 L254.10000000000002 728.8 V735.0 L248.3 738.4 L242.5 735.0 V728.8 Z" fill="#d2c07a" stroke="#5a4a2a" stroke-width="0.8" stroke-dasharray="1 0.6"/><path d="M242.9 728.8 L248.3 731.9 L253.70000000000002 728.8" stroke="#e9dca0" stroke-width="0.8" fill="none"/><text x="260.00" y="735.80" font-size="13" fill="#1f8dd6" textLength="49.00" lengthAdjust="spacingAndGlyphs" >rondelle</text><text x="557.00" y="735.80" font-size="13" fill="#404040" textLength="75.60" lengthAdjust="spacingAndGlyphs" >rondelle M16</text><text x="807.40" y="735.80" font-size="13" fill="#404040" text-anchor="end" textLength="26.90" lengthAdjust="spacingAndGlyphs" >0,00</text><text x="820.10" y="735.80" font-size="13" fill="#404040" textLength="14.90" lengthAdjust="spacingAndGlyphs" >HT</text><text x="1003.30" y="735.80" font-size="13" fill="#404040" text-anchor="end" textLength="71.90" lengthAdjust="spacingAndGlyphs" >22/04/2020</text><path d="M248.3 755.4 L254.10000000000002 758.8 V765.0 L248.3 768.4 L242.5 765.0 V758.8 Z" fill="#d2c07a" stroke="#5a4a2a" stroke-width="0.8" stroke-dasharray="1 0.6"/><path d="M242.9 758.8 L248.3 761.9 L253.70000000000002 758.8" stroke="#e9dca0" stroke-width="0.8" fill="none"/><text x="260.00" y="765.80" font-size="13" fill="#1f8dd6" textLength="46.30" lengthAdjust="spacingAndGlyphs" >Visserie</text><text x="557.00" y="765.80" font-size="13" fill="#404040" textLength="67.50" lengthAdjust="spacingAndGlyphs" >Boulon M16</text><text x="807.40" y="765.80" font-size="13" fill="#404040" text-anchor="end" textLength="26.90" lengthAdjust="spacingAndGlyphs" >0,00</text><text x="820.10" y="765.80" font-size="13" fill="#404040" textLength="14.90" lengthAdjust="spacingAndGlyphs" >HT</text><text x="1003.30" y="765.80" font-size="13" fill="#404040" text-anchor="end" textLength="71.90" lengthAdjust="spacingAndGlyphs" >22/04/2020</text><path d="M248.3 785.4 L254.10000000000002 788.8 V795.0 L248.3 798.4 L242.5 795.0 V788.8 Z" fill="#d2c07a" stroke="#5a4a2a" stroke-width="0.8" stroke-dasharray="1 0.6"/><path d="M242.9 788.8 L248.3 791.9 L253.70000000000002 788.8" stroke="#e9dca0" stroke-width="0.8" fill="none"/><text x="260.00" y="795.80" font-size="13" fill="#1f8dd6" textLength="55.20" lengthAdjust="spacingAndGlyphs" >Vis_0001</text><text x="557.00" y="795.80" font-size="13" fill="#404040" textLength="100.70" lengthAdjust="spacingAndGlyphs" >Vis M16, L 20mm</text><text x="807.40" y="795.80" font-size="13" fill="#404040" text-anchor="end" textLength="26.90" lengthAdjust="spacingAndGlyphs" >0,00</text><text x="820.10" y="795.80" font-size="13" fill="#404040" textLength="14.90" lengthAdjust="spacingAndGlyphs" >HT</text><text x="1003.30" y="795.80" font-size="13" fill="#404040" text-anchor="end" textLength="71.90" lengthAdjust="spacingAndGlyphs" >22/04/2020</text><path d="M248.3 815.4 L254.10000000000002 818.8 V825.0 L248.3 828.4 L242.5 825.0 V818.8 Z" fill="#d2c07a" stroke="#5a4a2a" stroke-width="0.8" stroke-dasharray="1 0.6"/><path d="M242.9 818.8 L248.3 821.9 L253.70000000000002 818.8" stroke="#e9dca0" stroke-width="0.8" fill="none"/><text x="260.00" y="825.80" font-size="13" fill="#1f8dd6" textLength="151.30" lengthAdjust="spacingAndGlyphs" >Copie_de_caisse_en_bois</text><text x="557.00" y="825.80" font-size="13" fill="#404040" textLength="81.40" lengthAdjust="spacingAndGlyphs" >caisse en bois</text><text x="807.40" y="825.80" font-size="13" fill="#404040" text-anchor="end" textLength="26.40" lengthAdjust="spacingAndGlyphs" >5,00</text><text x="820.10" y="825.80" font-size="13" fill="#404040" textLength="14.90" lengthAdjust="spacingAndGlyphs" >HT</text><text x="1003.30" y="825.80" font-size="13" fill="#404040" text-anchor="end" textLength="69.80" lengthAdjust="spacingAndGlyphs" >15/04/2020</text><text x="522.00" y="868.40" font-size="13" fill="#2592d0" textLength="188.00" lengthAdjust="spacingAndGlyphs" letter-spacing="1.4" stroke="#2592d0" stroke-width="0.35">PRODUITS EN ALERTE STOCK</text><rect x="1026.7" y="858.5" width="12" height="10.8" rx="1.6" fill="#2497d4"/><path d="M1030.1000000000001 861.3 L1035.3 866.5 M1035.3 861.3 L1030.1000000000001 866.5" stroke="#fff" stroke-width="2"/><g fill="#2497d4"><rect x="1008.7" y="859.9" width="1.7" height="8"/><rect x="1005.5500000000001" y="863.05" width="8" height="1.7"/><path d="M1009.5500000000001 857.6 l2.9 3.1 h-5.8 Z"/><path d="M1009.5500000000001 870.1999999999999 l2.9 -3.1 h-5.8 Z"/><path d="M1003.2500000000001 863.9 l3.1 2.9 v-5.8 Z"/><path d="M1015.85 863.9 l-3.1 2.9 v-5.8 Z"/></g><text x="503.00" y="900.00" font-size="13" fill="#404040" textLength="273.00" lengthAdjust="spacingAndGlyphs" >Pas de produits sous le seuil de stock minimal</text><text x="431.00" y="941.50" font-size="13" fill="#2592d0" textLength="346.00" lengthAdjust="spacingAndGlyphs" letter-spacing="1.4" stroke="#2592d0" stroke-width="0.35">RÉPARTITION DES PRODUIS/SERVICES - ANNÉE: 2020</text><rect x="1026.7" y="931.6" width="12" height="10.8" rx="1.6" fill="#2497d4"/><path d="M1030.1000000000001 934.4 L1035.3 939.6 M1035.3 934.4 L1030.1000000000001 939.6" stroke="#fff" stroke-width="2"/><g fill="#2497d4"><rect x="1008.7" y="933" width="1.7" height="8"/><rect x="1005.5500000000001" y="936.15" width="8" height="1.7"/><path d="M1009.5500000000001 930.7 l2.9 3.1 h-5.8 Z"/><path d="M1009.5500000000001 943.3 l2.9 -3.1 h-5.8 Z"/><path d="M1003.2500000000001 937 l3.1 2.9 v-5.8 Z"/><path d="M1015.85 937 l-3.1 2.9 v-5.8 Z"/></g><path d="M970.2 931 h12 l-4.6 5.3 v6.8 l-2.6 -1.9 v-4.9 Z" fill="#2497d4"/><text x="1341.80" y="159.20" font-size="13" fill="#2592d0" textLength="190.70" lengthAdjust="spacingAndGlyphs" letter-spacing="1.4" stroke="#2592d0" stroke-width="0.35">FACTURES CLIENTS PAR MOIS</text><rect x="1858" y="149.29999999999998" width="12" height="10.8" rx="1.6" fill="#2497d4"/><path d="M1861.4 152.1 L1866.6 157.29999999999998 M1866.6 152.1 L1861.4 157.29999999999998" stroke="#fff" stroke-width="2"/><g fill="#2497d4"><rect x="1840.0" y="150.7" width="1.7" height="8"/><rect x="1836.85" y="153.85" width="8" height="1.7"/><path d="M1840.85 148.39999999999998 l2.9 3.1 h-5.8 Z"/><path d="M1840.85 161.0 l2.9 -3.1 h-5.8 Z"/><path d="M1834.55 154.7 l3.1 2.9 v-5.8 Z"/><path d="M1847.1499999999999 154.7 l-3.1 2.9 v-5.8 Z"/></g><path d="M1801.5 148.7 h12 l-4.6 5.3 v6.8 l-2.6 -1.9 v-4.9 Z" fill="#2497d4"/><line x1="1159.1" y1="364.00" x2="1393.3" y2="364.00" stroke="#e4e4e4" stroke-width="1"/><text x="1158.80" y="367.90" font-size="10.8" fill="#7a7a7a" text-anchor="end" textLength="6.5" lengthAdjust="spacingAndGlyphs">0</text><line x1="1159.1" y1="324.00" x2="1393.3" y2="324.00" stroke="#e4e4e4" stroke-width="1"/><text x="1158.80" y="327.90" font-size="10.8" fill="#7a7a7a" text-anchor="end" textLength="13.0" lengthAdjust="spacingAndGlyphs">20</text><line x1="1159.1" y1="284.00" x2="1393.3" y2="284.00" stroke="#e4e4e4" stroke-width="1"/><text x="1158.80" y="287.90" font-size="10.8" fill="#7a7a7a" text-anchor="end" textLength="13.0" lengthAdjust="spacingAndGlyphs">40</text><line x1="1159.1" y1="244.00" x2="1393.3" y2="244.00" stroke="#e4e4e4" stroke-width="1"/><text x="1158.80" y="247.90" font-size="10.8" fill="#7a7a7a" text-anchor="end" textLength="13.0" lengthAdjust="spacingAndGlyphs">60</text><line x1="1159.1" y1="204.00" x2="1393.3" y2="204.00" stroke="#e4e4e4" stroke-width="1"/><text x="1158.80" y="207.90" font-size="10.8" fill="#7a7a7a" text-anchor="end" textLength="13.0" lengthAdjust="spacingAndGlyphs">80</text><line x1="1164.1" y1="204" x2="1164.1" y2="364" stroke="#e4e4e4"/><line x1="1393.3" y1="204" x2="1393.3" y2="364" stroke="#e4e4e4"/><line x1="1169.30" y1="204" x2="1169.30" y2="364" stroke="#e4e4e4"/><text x="1169.30" y="380.80" font-size="10" fill="#7a7a7a" text-anchor="middle" textLength="4.10" lengthAdjust="spacingAndGlyphs">J</text><line x1="1188.77" y1="204" x2="1188.77" y2="364" stroke="#e4e4e4"/><text x="1188.77" y="380.80" font-size="10" fill="#7a7a7a" text-anchor="middle" textLength="5.01" lengthAdjust="spacingAndGlyphs">F</text><line x1="1208.24" y1="204" x2="1208.24" y2="364" stroke="#e4e4e4"/><text x="1208.24" y="380.80" font-size="10" fill="#7a7a7a" text-anchor="middle" textLength="6.83" lengthAdjust="spacingAndGlyphs">M</text><line x1="1227.71" y1="204" x2="1227.71" y2="364" stroke="#e4e4e4"/><text x="1227.71" y="380.80" font-size="10" fill="#7a7a7a" text-anchor="middle" textLength="5.47" lengthAdjust="spacingAndGlyphs">A</text><line x1="1247.18" y1="204" x2="1247.18" y2="364" stroke="#e4e4e4"/><text x="1247.18" y="380.80" font-size="10" fill="#7a7a7a" text-anchor="middle" textLength="6.83" lengthAdjust="spacingAndGlyphs">M</text><line x1="1266.65" y1="204" x2="1266.65" y2="364" stroke="#e4e4e4"/><text x="1266.65" y="380.80" font-size="10" fill="#7a7a7a" text-anchor="middle" textLength="4.10" lengthAdjust="spacingAndGlyphs">J</text><line x1="1286.12" y1="204" x2="1286.12" y2="364" stroke="#e4e4e4"/><text x="1286.12" y="380.80" font-size="10" fill="#7a7a7a" text-anchor="middle" textLength="4.10" lengthAdjust="spacingAndGlyphs">J</text><line x1="1305.59" y1="204" x2="1305.59" y2="364" stroke="#e4e4e4"/><text x="1305.59" y="380.80" font-size="10" fill="#7a7a7a" text-anchor="middle" textLength="5.47" lengthAdjust="spacingAndGlyphs">A</text><line x1="1325.06" y1="204" x2="1325.06" y2="364" stroke="#e4e4e4"/><text x="1325.06" y="380.80" font-size="10" fill="#7a7a7a" text-anchor="middle" textLength="5.47" lengthAdjust="spacingAndGlyphs">S</text><line x1="1344.53" y1="204" x2="1344.53" y2="364" stroke="#e4e4e4"/><text x="1344.53" y="380.80" font-size="10" fill="#7a7a7a" text-anchor="middle" textLength="6.38" lengthAdjust="spacingAndGlyphs">O</text><line x1="1364.00" y1="204" x2="1364.00" y2="364" stroke="#e4e4e4"/><text x="1364.00" y="380.80" font-size="10" fill="#7a7a7a" text-anchor="middle" textLength="5.92" lengthAdjust="spacingAndGlyphs">N</text><line x1="1383.47" y1="204" x2="1383.47" y2="364" stroke="#e4e4e4"/><text x="1383.47" y="380.80" font-size="10" fill="#7a7a7a" text-anchor="middle" textLength="5.92" lengthAdjust="spacingAndGlyphs">D</text><rect x="1164.30" y="362.70" width="9.5" height="2" fill="#ffe08a"/><rect x="1169.80" y="352.50" width="9.30" height="11.00" fill="#4fce78" stroke="#3fc66b" stroke-width="1"/><rect x="1183.77" y="362.70" width="9.5" height="2" fill="#ffe08a"/><rect x="1189.27" y="326.50" width="9.30" height="37.00" fill="#4fce78" stroke="#3fc66b" stroke-width="1"/><rect x="1203.24" y="362.70" width="9.5" height="2" fill="#ffe08a"/><rect x="1208.74" y="210.50" width="9.30" height="153.00" fill="#4fce78" stroke="#3fc66b" stroke-width="1"/><rect x="1222.71" y="362.70" width="9.5" height="2" fill="#ffe08a"/><rect x="1228.21" y="314.50" width="9.30" height="49.00" fill="#4fce78" stroke="#3fc66b" stroke-width="1"/><rect x="1242.18" y="362.70" width="9.5" height="2" fill="#ffe08a"/><rect x="1247.18" y="362.70" width="5.15" height="2" fill="#66cf78"/><rect x="1252.33" y="362.70" width="5.15" height="2" fill="#7fdca6"/><rect x="1261.65" y="362.70" width="9.5" height="2" fill="#ffe08a"/><rect x="1266.65" y="362.70" width="5.15" height="2" fill="#66cf78"/><rect x="1271.80" y="362.70" width="5.15" height="2" fill="#7fdca6"/><rect x="1281.12" y="362.70" width="9.5" height="2" fill="#ffe08a"/><rect x="1286.12" y="362.70" width="5.15" height="2" fill="#66cf78"/><rect x="1291.27" y="362.70" width="5.15" height="2" fill="#7fdca6"/><rect x="1300.59" y="362.70" width="9.5" height="2" fill="#ffe08a"/><rect x="1305.59" y="362.70" width="5.15" height="2" fill="#66cf78"/><rect x="1310.74" y="362.70" width="5.15" height="2" fill="#7fdca6"/><rect x="1320.06" y="362.70" width="9.5" height="2" fill="#ffe08a"/><rect x="1325.06" y="362.70" width="5.15" height="2" fill="#66cf78"/><rect x="1330.21" y="362.70" width="5.15" height="2" fill="#7fdca6"/><rect x="1339.53" y="362.70" width="9.5" height="2" fill="#ffe08a"/><rect x="1344.53" y="362.70" width="5.15" height="2" fill="#66cf78"/><rect x="1349.68" y="362.70" width="5.15" height="2" fill="#7fdca6"/><rect x="1359.00" y="362.70" width="9.5" height="2" fill="#ffe08a"/><rect x="1364.00" y="362.70" width="5.15" height="2" fill="#66cf78"/><rect x="1369.15" y="362.70" width="5.15" height="2" fill="#7fdca6"/><rect x="1378.47" y="362.70" width="9.5" height="2" fill="#ffe08a"/><rect x="1383.47" y="362.70" width="5.15" height="2" fill="#66cf78"/><rect x="1388.62" y="362.70" width="5.15" height="2" fill="#7fdca6"/><rect x="1342.4" y="213.4" width="12" height="12" fill="#fff" stroke="#cfcfcf"/><rect x="1343.9" y="214.9" width="9" height="9" fill="#ffcf40"/><text x="1360.9" y="223.20000000000002" font-size="10.5" fill="#6a6a6a" textLength="23.5" lengthAdjust="spacingAndGlyphs">2019</text><rect x="1342.4" y="232.6" width="12" height="12" fill="#fff" stroke="#cfcfcf"/><rect x="1343.9" y="234.1" width="9" height="9" fill="#2ec45e"/><text x="1360.9" y="242.4" font-size="10.5" fill="#6a6a6a" textLength="23.5" lengthAdjust="spacingAndGlyphs">2020</text><text x="1201.35" y="191.20" font-size="12.5" fill="#444" textLength="141.9" lengthAdjust="spacingAndGlyphs">Nb de factures par mois</text><line x1="1579.9" y1="364.00" x2="1793.1" y2="364.00" stroke="#e4e4e4" stroke-width="1"/><text x="1579.10" y="367.90" font-size="10.8" fill="#7a7a7a" text-anchor="end" textLength="6.5" lengthAdjust="spacingAndGlyphs">0</text><line x1="1579.9" y1="324.00" x2="1793.1" y2="324.00" stroke="#e4e4e4" stroke-width="1"/><text x="1579.10" y="327.90" font-size="10.8" fill="#7a7a7a" text-anchor="end" textLength="32.5" lengthAdjust="spacingAndGlyphs">10000</text><line x1="1579.9" y1="284.00" x2="1793.1" y2="284.00" stroke="#e4e4e4" stroke-width="1"/><text x="1579.10" y="287.90" font-size="10.8" fill="#7a7a7a" text-anchor="end" textLength="32.5" lengthAdjust="spacingAndGlyphs">20000</text><line x1="1579.9" y1="244.00" x2="1793.1" y2="244.00" stroke="#e4e4e4" stroke-width="1"/><text x="1579.10" y="247.90" font-size="10.8" fill="#7a7a7a" text-anchor="end" textLength="32.5" lengthAdjust="spacingAndGlyphs">30000</text><line x1="1579.9" y1="204.00" x2="1793.1" y2="204.00" stroke="#e4e4e4" stroke-width="1"/><text x="1579.10" y="207.90" font-size="10.8" fill="#7a7a7a" text-anchor="end" textLength="32.5" lengthAdjust="spacingAndGlyphs">40000</text><line x1="1584.9" y1="204" x2="1584.9" y2="364" stroke="#e4e4e4"/><line x1="1793.1" y1="204" x2="1793.1" y2="364" stroke="#e4e4e4"/><line x1="1590.20" y1="204" x2="1590.20" y2="364" stroke="#e4e4e4"/><text x="1590.20" y="380.80" font-size="10" fill="#7a7a7a" text-anchor="middle" textLength="4.10" lengthAdjust="spacingAndGlyphs">J</text><line x1="1607.80" y1="204" x2="1607.80" y2="364" stroke="#e4e4e4"/><text x="1607.80" y="380.80" font-size="10" fill="#7a7a7a" text-anchor="middle" textLength="5.01" lengthAdjust="spacingAndGlyphs">F</text><line x1="1625.40" y1="204" x2="1625.40" y2="364" stroke="#e4e4e4"/><text x="1625.40" y="380.80" font-size="10" fill="#7a7a7a" text-anchor="middle" textLength="6.83" lengthAdjust="spacingAndGlyphs">M</text><line x1="1643.00" y1="204" x2="1643.00" y2="364" stroke="#e4e4e4"/><text x="1643.00" y="380.80" font-size="10" fill="#7a7a7a" text-anchor="middle" textLength="5.47" lengthAdjust="spacingAndGlyphs">A</text><line x1="1660.60" y1="204" x2="1660.60" y2="364" stroke="#e4e4e4"/><text x="1660.60" y="380.80" font-size="10" fill="#7a7a7a" text-anchor="middle" textLength="6.83" lengthAdjust="spacingAndGlyphs">M</text><line x1="1678.20" y1="204" x2="1678.20" y2="364" stroke="#e4e4e4"/><text x="1678.20" y="380.80" font-size="10" fill="#7a7a7a" text-anchor="middle" textLength="4.10" lengthAdjust="spacingAndGlyphs">J</text><line x1="1695.80" y1="204" x2="1695.80" y2="364" stroke="#e4e4e4"/><text x="1695.80" y="380.80" font-size="10" fill="#7a7a7a" text-anchor="middle" textLength="4.10" lengthAdjust="spacingAndGlyphs">J</text><line x1="1713.40" y1="204" x2="1713.40" y2="364" stroke="#e4e4e4"/><text x="1713.40" y="380.80" font-size="10" fill="#7a7a7a" text-anchor="middle" textLength="5.47" lengthAdjust="spacingAndGlyphs">A</text><line x1="1731.00" y1="204" x2="1731.00" y2="364" stroke="#e4e4e4"/><text x="1731.00" y="380.80" font-size="10" fill="#7a7a7a" text-anchor="middle" textLength="5.47" lengthAdjust="spacingAndGlyphs">S</text><line x1="1748.60" y1="204" x2="1748.60" y2="364" stroke="#e4e4e4"/><text x="1748.60" y="380.80" font-size="10" fill="#7a7a7a" text-anchor="middle" textLength="6.38" lengthAdjust="spacingAndGlyphs">O</text><line x1="1766.20" y1="204" x2="1766.20" y2="364" stroke="#e4e4e4"/><text x="1766.20" y="380.80" font-size="10" fill="#7a7a7a" text-anchor="middle" textLength="5.92" lengthAdjust="spacingAndGlyphs">N</text><line x1="1783.80" y1="204" x2="1783.80" y2="364" stroke="#e4e4e4"/><text x="1783.80" y="380.80" font-size="10" fill="#7a7a7a" text-anchor="middle" textLength="5.92" lengthAdjust="spacingAndGlyphs">D</text><rect x="1585.20" y="362.70" width="9.5" height="2" fill="#ffe08a"/><rect x="1590.70" y="322.30" width="9.00" height="41.20" fill="#4fce78" stroke="#3fc66b" stroke-width="1"/><rect x="1602.80" y="362.70" width="9.5" height="2" fill="#ffe08a"/><rect x="1608.30" y="269.70" width="9.00" height="93.80" fill="#4fce78" stroke="#3fc66b" stroke-width="1"/><rect x="1620.40" y="362.70" width="9.5" height="2" fill="#ffe08a"/><rect x="1625.90" y="237.90" width="9.00" height="125.60" fill="#4fce78" stroke="#3fc66b" stroke-width="1"/><rect x="1638.00" y="362.70" width="9.5" height="2" fill="#ffe08a"/><rect x="1643.50" y="300.30" width="9.00" height="63.20" fill="#4fce78" stroke="#3fc66b" stroke-width="1"/><rect x="1655.60" y="362.70" width="9.5" height="2" fill="#ffe08a"/><rect x="1660.60" y="362.70" width="5.00" height="2" fill="#66cf78"/><rect x="1665.60" y="362.70" width="5.00" height="2" fill="#7fdca6"/><rect x="1673.20" y="362.70" width="9.5" height="2" fill="#ffe08a"/><rect x="1678.20" y="362.70" width="5.00" height="2" fill="#66cf78"/><rect x="1683.20" y="362.70" width="5.00" height="2" fill="#7fdca6"/><rect x="1690.80" y="362.70" width="9.5" height="2" fill="#ffe08a"/><rect x="1695.80" y="362.70" width="5.00" height="2" fill="#66cf78"/><rect x="1700.80" y="362.70" width="5.00" height="2" fill="#7fdca6"/><rect x="1708.40" y="362.70" width="9.5" height="2" fill="#ffe08a"/><rect x="1713.40" y="362.70" width="5.00" height="2" fill="#66cf78"/><rect x="1718.40" y="362.70" width="5.00" height="2" fill="#7fdca6"/><rect x="1726.00" y="362.70" width="9.5" height="2" fill="#ffe08a"/><rect x="1731.00" y="362.70" width="5.00" height="2" fill="#66cf78"/><rect x="1736.00" y="362.70" width="5.00" height="2" fill="#7fdca6"/><rect x="1743.60" y="362.70" width="9.5" height="2" fill="#ffe08a"/><rect x="1748.60" y="362.70" width="5.00" height="2" fill="#66cf78"/><rect x="1753.60" y="362.70" width="5.00" height="2" fill="#7fdca6"/><rect x="1761.20" y="362.70" width="9.5" height="2" fill="#ffe08a"/><rect x="1766.20" y="362.70" width="5.00" height="2" fill="#66cf78"/><rect x="1771.20" y="362.70" width="5.00" height="2" fill="#7fdca6"/><rect x="1778.80" y="362.70" width="9.5" height="2" fill="#ffe08a"/><rect x="1783.80" y="362.70" width="5.00" height="2" fill="#66cf78"/><rect x="1788.80" y="362.70" width="5.00" height="2" fill="#7fdca6"/><rect x="1742.1" y="213.4" width="12" height="12" fill="#fff" stroke="#cfcfcf"/><rect x="1743.6" y="214.9" width="9" height="9" fill="#ffcf40"/><text x="1760.6" y="223.20000000000002" font-size="10.5" fill="#6a6a6a" textLength="23.5" lengthAdjust="spacingAndGlyphs">2019</text><rect x="1742.1" y="232.6" width="12" height="12" fill="#fff" stroke="#cfcfcf"/><rect x="1743.6" y="234.1" width="9" height="9" fill="#2ec45e"/><text x="1760.6" y="242.4" font-size="10.5" fill="#6a6a6a" textLength="23.5" lengthAdjust="spacingAndGlyphs">2020</text><text x="1570.60" y="191.20" font-size="12.5" fill="#444" textLength="203.2" lengthAdjust="spacingAndGlyphs">Montant de factures par mois (HT)</text><text x="1303.80" y="425.00" font-size="13" fill="#2592d0" textLength="290.10" lengthAdjust="spacingAndGlyphs" letter-spacing="1.4" stroke="#2592d0" stroke-width="0.35">ANNIVERSAIRES DE CE MOIS (UTILISATEURS)</text><rect x="1858" y="415.1" width="12" height="10.8" rx="1.6" fill="#2497d4"/><path d="M1861.4 417.90000000000003 L1866.6 423.1 M1866.6 417.90000000000003 L1861.4 423.1" stroke="#fff" stroke-width="2"/><g fill="#2497d4"><rect x="1840.0" y="416.5" width="1.7" height="8"/><rect x="1836.85" y="419.65" width="8" height="1.7"/><path d="M1840.85 414.2 l2.9 3.1 h-5.8 Z"/><path d="M1840.85 426.8 l2.9 -3.1 h-5.8 Z"/><path d="M1834.55 420.5 l3.1 2.9 v-5.8 Z"/><path d="M1847.1499999999999 420.5 l-3.1 2.9 v-5.8 Z"/></g><text x="1454.20" y="456.80" font-size="13" fill="#404040" textLength="36.70" lengthAdjust="spacingAndGlyphs" >Aucun</text><text x="1360.20" y="498.90" font-size="13" fill="#2592d0" textLength="154.00" lengthAdjust="spacingAndGlyphs" letter-spacing="1.4" stroke="#2592d0" stroke-width="0.35">PROPOSITION PAR MOIS</text><rect x="1858" y="489.0" width="12" height="10.8" rx="1.6" fill="#2497d4"/><path d="M1861.4 491.8 L1866.6 497.0 M1866.6 491.8 L1861.4 497.0" stroke="#fff" stroke-width="2"/><g fill="#2497d4"><rect x="1840.0" y="490.4" width="1.7" height="8"/><rect x="1836.85" y="493.54999999999995" width="8" height="1.7"/><path d="M1840.85 488.09999999999997 l2.9 3.1 h-5.8 Z"/><path d="M1840.85 500.7 l2.9 -3.1 h-5.8 Z"/><path d="M1834.55 494.4 l3.1 2.9 v-5.8 Z"/><path d="M1847.1499999999999 494.4 l-3.1 2.9 v-5.8 Z"/></g><path d="M1801.5 488.4 h12 l-4.6 5.3 v6.8 l-2.6 -1.9 v-4.9 Z" fill="#2497d4"/><line x1="1152.4" y1="703.90" x2="1393" y2="703.90" stroke="#e4e4e4" stroke-width="1"/><text x="1152.00" y="707.80" font-size="10.8" fill="#7a7a7a" text-anchor="end" textLength="6.5" lengthAdjust="spacingAndGlyphs">0</text><line x1="1152.4" y1="677.25" x2="1393" y2="677.25" stroke="#e4e4e4" stroke-width="1"/><text x="1152.00" y="681.15" font-size="10.8" fill="#7a7a7a" text-anchor="end" textLength="6.5" lengthAdjust="spacingAndGlyphs">1</text><line x1="1152.4" y1="650.60" x2="1393" y2="650.60" stroke="#e4e4e4" stroke-width="1"/><text x="1152.00" y="654.50" font-size="10.8" fill="#7a7a7a" text-anchor="end" textLength="6.5" lengthAdjust="spacingAndGlyphs">2</text><line x1="1152.4" y1="623.95" x2="1393" y2="623.95" stroke="#e4e4e4" stroke-width="1"/><text x="1152.00" y="627.85" font-size="10.8" fill="#7a7a7a" text-anchor="end" textLength="6.5" lengthAdjust="spacingAndGlyphs">3</text><line x1="1152.4" y1="597.30" x2="1393" y2="597.30" stroke="#e4e4e4" stroke-width="1"/><text x="1152.00" y="601.20" font-size="10.8" fill="#7a7a7a" text-anchor="end" textLength="6.5" lengthAdjust="spacingAndGlyphs">4</text><line x1="1152.4" y1="570.65" x2="1393" y2="570.65" stroke="#e4e4e4" stroke-width="1"/><text x="1152.00" y="574.55" font-size="10.8" fill="#7a7a7a" text-anchor="end" textLength="6.5" lengthAdjust="spacingAndGlyphs">5</text><line x1="1152.4" y1="544.00" x2="1393" y2="544.00" stroke="#e4e4e4" stroke-width="1"/><text x="1152.00" y="547.90" font-size="10.8" fill="#7a7a7a" text-anchor="end" textLength="6.5" lengthAdjust="spacingAndGlyphs">6</text><line x1="1157.4" y1="544" x2="1157.4" y2="703.9" stroke="#e4e4e4"/><line x1="1393" y1="544" x2="1393" y2="703.9" stroke="#e4e4e4"/><line x1="1163.00" y1="544" x2="1163.00" y2="703.9" stroke="#e4e4e4"/><text x="1163.00" y="721.00" font-size="10" fill="#7a7a7a" text-anchor="middle" textLength="4.10" lengthAdjust="spacingAndGlyphs">J</text><line x1="1183.05" y1="544" x2="1183.05" y2="703.9" stroke="#e4e4e4"/><text x="1183.05" y="721.00" font-size="10" fill="#7a7a7a" text-anchor="middle" textLength="5.01" lengthAdjust="spacingAndGlyphs">F</text><line x1="1203.10" y1="544" x2="1203.10" y2="703.9" stroke="#e4e4e4"/><text x="1203.10" y="721.00" font-size="10" fill="#7a7a7a" text-anchor="middle" textLength="6.83" lengthAdjust="spacingAndGlyphs">M</text><line x1="1223.15" y1="544" x2="1223.15" y2="703.9" stroke="#e4e4e4"/><text x="1223.15" y="721.00" font-size="10" fill="#7a7a7a" text-anchor="middle" textLength="5.47" lengthAdjust="spacingAndGlyphs">A</text><line x1="1243.20" y1="544" x2="1243.20" y2="703.9" stroke="#e4e4e4"/><text x="1243.20" y="721.00" font-size="10" fill="#7a7a7a" text-anchor="middle" textLength="6.83" lengthAdjust="spacingAndGlyphs">M</text><line x1="1263.25" y1="544" x2="1263.25" y2="703.9" stroke="#e4e4e4"/><text x="1263.25" y="721.00" font-size="10" fill="#7a7a7a" text-anchor="middle" textLength="4.10" lengthAdjust="spacingAndGlyphs">J</text><line x1="1283.30" y1="544" x2="1283.30" y2="703.9" stroke="#e4e4e4"/><text x="1283.30" y="721.00" font-size="10" fill="#7a7a7a" text-anchor="middle" textLength="4.10" lengthAdjust="spacingAndGlyphs">J</text><line x1="1303.35" y1="544" x2="1303.35" y2="703.9" stroke="#e4e4e4"/><text x="1303.35" y="721.00" font-size="10" fill="#7a7a7a" text-anchor="middle" textLength="5.47" lengthAdjust="spacingAndGlyphs">A</text><line x1="1323.40" y1="544" x2="1323.40" y2="703.9" stroke="#e4e4e4"/><text x="1323.40" y="721.00" font-size="10" fill="#7a7a7a" text-anchor="middle" textLength="5.47" lengthAdjust="spacingAndGlyphs">S</text><line x1="1343.45" y1="544" x2="1343.45" y2="703.9" stroke="#e4e4e4"/><text x="1343.45" y="721.00" font-size="10" fill="#7a7a7a" text-anchor="middle" textLength="6.38" lengthAdjust="spacingAndGlyphs">O</text><line x1="1363.50" y1="544" x2="1363.50" y2="703.9" stroke="#e4e4e4"/><text x="1363.50" y="721.00" font-size="10" fill="#7a7a7a" text-anchor="middle" textLength="5.92" lengthAdjust="spacingAndGlyphs">N</text><line x1="1383.55" y1="544" x2="1383.55" y2="703.9" stroke="#e4e4e4"/><text x="1383.55" y="721.00" font-size="10" fill="#7a7a7a" text-anchor="middle" textLength="5.92" lengthAdjust="spacingAndGlyphs">D</text><rect x="1158.00" y="702.60" width="9.5" height="2" fill="#ffe08a"/><rect x="1163.50" y="651.10" width="9.40" height="52.30" fill="#4fce78" stroke="#3fc66b" stroke-width="1"/><rect x="1178.05" y="702.60" width="9.5" height="2" fill="#ffe08a"/><rect x="1183.55" y="651.10" width="9.40" height="52.30" fill="#4fce78" stroke="#3fc66b" stroke-width="1"/><rect x="1198.10" y="702.60" width="9.5" height="2" fill="#ffe08a"/><rect x="1203.60" y="571.15" width="9.40" height="132.25" fill="#4fce78" stroke="#3fc66b" stroke-width="1"/><rect x="1218.15" y="702.60" width="9.5" height="2" fill="#ffe08a"/><rect x="1223.65" y="651.10" width="9.40" height="52.30" fill="#4fce78" stroke="#3fc66b" stroke-width="1"/><rect x="1238.20" y="702.60" width="9.5" height="2" fill="#ffe08a"/><rect x="1243.20" y="702.60" width="5.20" height="2" fill="#66cf78"/><rect x="1248.40" y="702.60" width="5.20" height="2" fill="#7fdca6"/><rect x="1258.25" y="702.60" width="9.5" height="2" fill="#ffe08a"/><rect x="1263.25" y="702.60" width="5.20" height="2" fill="#66cf78"/><rect x="1268.45" y="702.60" width="5.20" height="2" fill="#7fdca6"/><rect x="1278.30" y="702.60" width="9.5" height="2" fill="#ffe08a"/><rect x="1283.30" y="702.60" width="5.20" height="2" fill="#66cf78"/><rect x="1288.50" y="702.60" width="5.20" height="2" fill="#7fdca6"/><rect x="1298.35" y="702.60" width="9.5" height="2" fill="#ffe08a"/><rect x="1303.35" y="702.60" width="5.20" height="2" fill="#66cf78"/><rect x="1308.55" y="702.60" width="5.20" height="2" fill="#7fdca6"/><rect x="1318.40" y="702.60" width="9.5" height="2" fill="#ffe08a"/><rect x="1323.40" y="702.60" width="5.20" height="2" fill="#66cf78"/><rect x="1328.60" y="702.60" width="5.20" height="2" fill="#7fdca6"/><rect x="1338.45" y="702.60" width="9.5" height="2" fill="#ffe08a"/><rect x="1343.45" y="702.60" width="5.20" height="2" fill="#66cf78"/><rect x="1348.65" y="702.60" width="5.20" height="2" fill="#7fdca6"/><rect x="1358.50" y="702.60" width="9.5" height="2" fill="#ffe08a"/><rect x="1363.50" y="702.60" width="5.20" height="2" fill="#66cf78"/><rect x="1368.70" y="702.60" width="5.20" height="2" fill="#7fdca6"/><rect x="1378.55" y="702.60" width="9.5" height="2" fill="#ffe08a"/><rect x="1383.55" y="702.60" width="5.20" height="2" fill="#66cf78"/><rect x="1388.75" y="702.60" width="5.20" height="2" fill="#7fdca6"/><rect x="1342.4" y="553.1" width="12" height="12" fill="#fff" stroke="#cfcfcf"/><rect x="1343.9" y="554.6" width="9" height="9" fill="#ffcf40"/><text x="1360.9" y="562.9" font-size="10.5" fill="#6a6a6a" textLength="23.5" lengthAdjust="spacingAndGlyphs">2019</text><rect x="1342.4" y="572.3000000000001" width="12" height="12" fill="#fff" stroke="#cfcfcf"/><rect x="1343.9" y="573.8000000000001" width="9" height="9" fill="#2ec45e"/><text x="1360.9" y="582.1" font-size="10.5" fill="#6a6a6a" textLength="23.5" lengthAdjust="spacingAndGlyphs">2020</text><text x="1221.00" y="530.90" font-size="12.5" fill="#444" textLength="102.0" lengthAdjust="spacingAndGlyphs">Nombre par mois</text><line x1="1573.5" y1="703.90" x2="1793.1" y2="703.90" stroke="#e4e4e4" stroke-width="1"/><text x="1572.40" y="707.80" font-size="10.8" fill="#7a7a7a" text-anchor="end" textLength="6.5" lengthAdjust="spacingAndGlyphs">0</text><line x1="1573.5" y1="677.25" x2="1793.1" y2="677.25" stroke="#e4e4e4" stroke-width="1"/><text x="1572.40" y="681.15" font-size="10.8" fill="#7a7a7a" text-anchor="end" textLength="26.0" lengthAdjust="spacingAndGlyphs">1000</text><line x1="1573.5" y1="650.60" x2="1793.1" y2="650.60" stroke="#e4e4e4" stroke-width="1"/><text x="1572.40" y="654.50" font-size="10.8" fill="#7a7a7a" text-anchor="end" textLength="26.0" lengthAdjust="spacingAndGlyphs">2000</text><line x1="1573.5" y1="623.95" x2="1793.1" y2="623.95" stroke="#e4e4e4" stroke-width="1"/><text x="1572.40" y="627.85" font-size="10.8" fill="#7a7a7a" text-anchor="end" textLength="26.0" lengthAdjust="spacingAndGlyphs">3000</text><line x1="1573.5" y1="597.30" x2="1793.1" y2="597.30" stroke="#e4e4e4" stroke-width="1"/><text x="1572.40" y="601.20" font-size="10.8" fill="#7a7a7a" text-anchor="end" textLength="26.0" lengthAdjust="spacingAndGlyphs">4000</text><line x1="1573.5" y1="570.65" x2="1793.1" y2="570.65" stroke="#e4e4e4" stroke-width="1"/><text x="1572.40" y="574.55" font-size="10.8" fill="#7a7a7a" text-anchor="end" textLength="26.0" lengthAdjust="spacingAndGlyphs">5000</text><line x1="1573.5" y1="544.00" x2="1793.1" y2="544.00" stroke="#e4e4e4" stroke-width="1"/><text x="1572.40" y="547.90" font-size="10.8" fill="#7a7a7a" text-anchor="end" textLength="26.0" lengthAdjust="spacingAndGlyphs">6000</text><line x1="1578.5" y1="544" x2="1578.5" y2="703.9" stroke="#e4e4e4"/><line x1="1793.1" y1="544" x2="1793.1" y2="703.9" stroke="#e4e4e4"/><line x1="1583.50" y1="544" x2="1583.50" y2="703.9" stroke="#e4e4e4"/><text x="1583.50" y="721.00" font-size="10" fill="#7a7a7a" text-anchor="middle" textLength="4.10" lengthAdjust="spacingAndGlyphs">J</text><line x1="1601.70" y1="544" x2="1601.70" y2="703.9" stroke="#e4e4e4"/><text x="1601.70" y="721.00" font-size="10" fill="#7a7a7a" text-anchor="middle" textLength="5.01" lengthAdjust="spacingAndGlyphs">F</text><line x1="1619.90" y1="544" x2="1619.90" y2="703.9" stroke="#e4e4e4"/><text x="1619.90" y="721.00" font-size="10" fill="#7a7a7a" text-anchor="middle" textLength="6.83" lengthAdjust="spacingAndGlyphs">M</text><line x1="1638.10" y1="544" x2="1638.10" y2="703.9" stroke="#e4e4e4"/><text x="1638.10" y="721.00" font-size="10" fill="#7a7a7a" text-anchor="middle" textLength="5.47" lengthAdjust="spacingAndGlyphs">A</text><line x1="1656.30" y1="544" x2="1656.30" y2="703.9" stroke="#e4e4e4"/><text x="1656.30" y="721.00" font-size="10" fill="#7a7a7a" text-anchor="middle" textLength="6.83" lengthAdjust="spacingAndGlyphs">M</text><line x1="1674.50" y1="544" x2="1674.50" y2="703.9" stroke="#e4e4e4"/><text x="1674.50" y="721.00" font-size="10" fill="#7a7a7a" text-anchor="middle" textLength="4.10" lengthAdjust="spacingAndGlyphs">J</text><line x1="1692.70" y1="544" x2="1692.70" y2="703.9" stroke="#e4e4e4"/><text x="1692.70" y="721.00" font-size="10" fill="#7a7a7a" text-anchor="middle" textLength="4.10" lengthAdjust="spacingAndGlyphs">J</text><line x1="1710.90" y1="544" x2="1710.90" y2="703.9" stroke="#e4e4e4"/><text x="1710.90" y="721.00" font-size="10" fill="#7a7a7a" text-anchor="middle" textLength="5.47" lengthAdjust="spacingAndGlyphs">A</text><line x1="1729.10" y1="544" x2="1729.10" y2="703.9" stroke="#e4e4e4"/><text x="1729.10" y="721.00" font-size="10" fill="#7a7a7a" text-anchor="middle" textLength="5.47" lengthAdjust="spacingAndGlyphs">S</text><line x1="1747.30" y1="544" x2="1747.30" y2="703.9" stroke="#e4e4e4"/><text x="1747.30" y="721.00" font-size="10" fill="#7a7a7a" text-anchor="middle" textLength="6.38" lengthAdjust="spacingAndGlyphs">O</text><line x1="1765.50" y1="544" x2="1765.50" y2="703.9" stroke="#e4e4e4"/><text x="1765.50" y="721.00" font-size="10" fill="#7a7a7a" text-anchor="middle" textLength="5.92" lengthAdjust="spacingAndGlyphs">N</text><line x1="1783.70" y1="544" x2="1783.70" y2="703.9" stroke="#e4e4e4"/><text x="1783.70" y="721.00" font-size="10" fill="#7a7a7a" text-anchor="middle" textLength="5.92" lengthAdjust="spacingAndGlyphs">D</text><rect x="1578.50" y="702.60" width="9.5" height="2" fill="#ffe08a"/><rect x="1584.00" y="555.69" width="9.00" height="147.71" fill="#4fce78" stroke="#3fc66b" stroke-width="1"/><rect x="1596.70" y="702.60" width="9.5" height="2" fill="#ffe08a"/><rect x="1602.20" y="567.29" width="9.00" height="136.11" fill="#4fce78" stroke="#3fc66b" stroke-width="1"/><rect x="1614.90" y="702.60" width="9.5" height="2" fill="#ffe08a"/><rect x="1620.40" y="550.20" width="9.00" height="153.20" fill="#4fce78" stroke="#3fc66b" stroke-width="1"/><rect x="1633.10" y="702.60" width="9.5" height="2" fill="#ffe08a"/><rect x="1638.60" y="656.99" width="9.00" height="46.41" fill="#4fce78" stroke="#3fc66b" stroke-width="1"/><rect x="1651.30" y="702.60" width="9.5" height="2" fill="#ffe08a"/><rect x="1656.30" y="702.60" width="5.00" height="2" fill="#66cf78"/><rect x="1661.30" y="702.60" width="5.00" height="2" fill="#7fdca6"/><rect x="1669.50" y="702.60" width="9.5" height="2" fill="#ffe08a"/><rect x="1674.50" y="702.60" width="5.00" height="2" fill="#66cf78"/><rect x="1679.50" y="702.60" width="5.00" height="2" fill="#7fdca6"/><rect x="1687.70" y="702.60" width="9.5" height="2" fill="#ffe08a"/><rect x="1692.70" y="702.60" width="5.00" height="2" fill="#66cf78"/><rect x="1697.70" y="702.60" width="5.00" height="2" fill="#7fdca6"/><rect x="1705.90" y="702.60" width="9.5" height="2" fill="#ffe08a"/><rect x="1710.90" y="702.60" width="5.00" height="2" fill="#66cf78"/><rect x="1715.90" y="702.60" width="5.00" height="2" fill="#7fdca6"/><rect x="1724.10" y="702.60" width="9.5" height="2" fill="#ffe08a"/><rect x="1729.10" y="702.60" width="5.00" height="2" fill="#66cf78"/><rect x="1734.10" y="702.60" width="5.00" height="2" fill="#7fdca6"/><rect x="1742.30" y="702.60" width="9.5" height="2" fill="#ffe08a"/><rect x="1747.30" y="702.60" width="5.00" height="2" fill="#66cf78"/><rect x="1752.30" y="702.60" width="5.00" height="2" fill="#7fdca6"/><rect x="1760.50" y="702.60" width="9.5" height="2" fill="#ffe08a"/><rect x="1765.50" y="702.60" width="5.00" height="2" fill="#66cf78"/><rect x="1770.50" y="702.60" width="5.00" height="2" fill="#7fdca6"/><rect x="1778.70" y="702.60" width="9.5" height="2" fill="#ffe08a"/><rect x="1783.70" y="702.60" width="5.00" height="2" fill="#66cf78"/><rect x="1788.70" y="702.60" width="5.00" height="2" fill="#7fdca6"/><rect x="1742.1" y="553.1" width="12" height="12" fill="#fff" stroke="#cfcfcf"/><rect x="1743.6" y="554.6" width="9" height="9" fill="#ffcf40"/><text x="1760.6" y="562.9" font-size="10.5" fill="#6a6a6a" textLength="23.5" lengthAdjust="spacingAndGlyphs">2019</text><rect x="1742.1" y="572.3000000000001" width="12" height="12" fill="#fff" stroke="#cfcfcf"/><rect x="1743.6" y="573.8000000000001" width="9" height="9" fill="#2ec45e"/><text x="1760.6" y="582.1" font-size="10.5" fill="#6a6a6a" textLength="23.5" lengthAdjust="spacingAndGlyphs">2020</text><text x="1605.95" y="530.90" font-size="12.5" fill="#444" textLength="132.5" lengthAdjust="spacingAndGlyphs">Montant par mois (HT)</text><text x="1333.40" y="765.00" font-size="13" fill="#2592d0" textLength="230.00" lengthAdjust="spacingAndGlyphs" letter-spacing="1.4" stroke="#2592d0" stroke-width="0.35">LES 5 DERNIERS CLIENTS MODIFIÉS</text><rect x="1858" y="755.1" width="12" height="10.8" rx="1.6" fill="#2497d4"/><path d="M1861.4 757.9 L1866.6 763.1 M1866.6 757.9 L1861.4 763.1" stroke="#fff" stroke-width="2"/><g fill="#2497d4"><rect x="1840.0" y="756.5" width="1.7" height="8"/><rect x="1836.85" y="759.65" width="8" height="1.7"/><path d="M1840.85 754.2 l2.9 3.1 h-5.8 Z"/><path d="M1840.85 766.8 l2.9 -3.1 h-5.8 Z"/><path d="M1834.55 760.5 l3.1 2.9 v-5.8 Z"/><path d="M1847.1499999999999 760.5 l-3.1 2.9 v-5.8 Z"/></g><rect x="1074.2" y="789.2" width="10" height="11.5" fill="#a3a8cc"/><rect x="1083.2" y="787.2" width="5" height="13.5" rx="1" fill="#6a73a8"/><rect x="1075.5" y="791.2" width="1.8" height="1.8" fill="#fff"/><rect x="1078.5" y="791.2" width="1.8" height="1.8" fill="#fff"/><rect x="1081.5" y="791.2" width="1.8" height="1.8" fill="#fff"/><rect x="1075.5" y="794.4000000000001" width="1.8" height="1.8" fill="#fff"/><rect x="1078.5" y="794.4000000000001" width="1.8" height="1.8" fill="#fff"/><rect x="1081.5" y="794.4000000000001" width="1.8" height="1.8" fill="#fff"/><rect x="1075.5" y="797.6" width="1.8" height="1.8" fill="#fff"/><rect x="1078.5" y="797.6" width="1.8" height="1.8" fill="#fff"/><rect x="1081.5" y="797.6" width="1.8" height="1.8" fill="#fff"/><rect x="1084.2" y="790.2" width="3" height="1" fill="#c8cce0"/><rect x="1084.2" y="793.2" width="3" height="1" fill="#c8cce0"/><rect x="1084.2" y="796.2" width="3" height="1" fill="#c8cce0"/><text x="1092.80" y="797.20" font-size="13" fill="#1f8dd6" textLength="46.10" lengthAdjust="spacingAndGlyphs" >OZTURK</text><text x="1853.50" y="797.20" font-size="13" fill="#404040" text-anchor="end" textLength="71.60" lengthAdjust="spacingAndGlyphs" >22/04/2020</text><rect x="1074.2" y="819.2" width="10" height="11.5" fill="#a3a8cc"/><rect x="1083.2" y="817.2" width="5" height="13.5" rx="1" fill="#6a73a8"/><rect x="1075.5" y="821.2" width="1.8" height="1.8" fill="#fff"/><rect x="1078.5" y="821.2" width="1.8" height="1.8" fill="#fff"/><rect x="1081.5" y="821.2" width="1.8" height="1.8" fill="#fff"/><rect x="1075.5" y="824.4000000000001" width="1.8" height="1.8" fill="#fff"/><rect x="1078.5" y="824.4000000000001" width="1.8" height="1.8" fill="#fff"/><rect x="1081.5" y="824.4000000000001" width="1.8" height="1.8" fill="#fff"/><rect x="1075.5" y="827.6" width="1.8" height="1.8" fill="#fff"/><rect x="1078.5" y="827.6" width="1.8" height="1.8" fill="#fff"/><rect x="1081.5" y="827.6" width="1.8" height="1.8" fill="#fff"/><rect x="1084.2" y="820.2" width="3" height="1" fill="#c8cce0"/><rect x="1084.2" y="823.2" width="3" height="1" fill="#c8cce0"/><rect x="1084.2" y="826.2" width="3" height="1" fill="#c8cce0"/><text x="1092.80" y="827.20" font-size="13" fill="#1f8dd6" textLength="32.40" lengthAdjust="spacingAndGlyphs" >Bidon</text><text x="1853.50" y="827.20" font-size="13" fill="#404040" text-anchor="end" textLength="71.60" lengthAdjust="spacingAndGlyphs" >22/04/2020</text><rect x="1074.2" y="849.2" width="10" height="11.5" fill="#a3a8cc"/><rect x="1083.2" y="847.2" width="5" height="13.5" rx="1" fill="#6a73a8"/><rect x="1075.5" y="851.2" width="1.8" height="1.8" fill="#fff"/><rect x="1078.5" y="851.2" width="1.8" height="1.8" fill="#fff"/><rect x="1081.5" y="851.2" width="1.8" height="1.8" fill="#fff"/><rect x="1075.5" y="854.4000000000001" width="1.8" height="1.8" fill="#fff"/><rect x="1078.5" y="854.4000000000001" width="1.8" height="1.8" fill="#fff"/><rect x="1081.5" y="854.4000000000001" width="1.8" height="1.8" fill="#fff"/><rect x="1075.5" y="857.6" width="1.8" height="1.8" fill="#fff"/><rect x="1078.5" y="857.6" width="1.8" height="1.8" fill="#fff"/><rect x="1081.5" y="857.6" width="1.8" height="1.8" fill="#fff"/><rect x="1084.2" y="850.2" width="3" height="1" fill="#c8cce0"/><rect x="1084.2" y="853.2" width="3" height="1" fill="#c8cce0"/><rect x="1084.2" y="856.2" width="3" height="1" fill="#c8cce0"/><text x="1092.80" y="857.20" font-size="13" fill="#1f8dd6" textLength="42.20" lengthAdjust="spacingAndGlyphs" >Durand</text><text x="1853.50" y="857.20" font-size="13" fill="#404040" text-anchor="end" textLength="69.00" lengthAdjust="spacingAndGlyphs" >14/04/2020</text><rect x="1074.2" y="879.2" width="10" height="11.5" fill="#a3a8cc"/><rect x="1083.2" y="877.2" width="5" height="13.5" rx="1" fill="#6a73a8"/><rect x="1075.5" y="881.2" width="1.8" height="1.8" fill="#fff"/><rect x="1078.5" y="881.2" width="1.8" height="1.8" fill="#fff"/><rect x="1081.5" y="881.2" width="1.8" height="1.8" fill="#fff"/><rect x="1075.5" y="884.4000000000001" width="1.8" height="1.8" fill="#fff"/><rect x="1078.5" y="884.4000000000001" width="1.8" height="1.8" fill="#fff"/><rect x="1081.5" y="884.4000000000001" width="1.8" height="1.8" fill="#fff"/><rect x="1075.5" y="887.6" width="1.8" height="1.8" fill="#fff"/><rect x="1078.5" y="887.6" width="1.8" height="1.8" fill="#fff"/><rect x="1081.5" y="887.6" width="1.8" height="1.8" fill="#fff"/><rect x="1084.2" y="880.2" width="3" height="1" fill="#c8cce0"/><rect x="1084.2" y="883.2" width="3" height="1" fill="#c8cce0"/><rect x="1084.2" y="886.2" width="3" height="1" fill="#c8cce0"/><text x="1092.80" y="887.20" font-size="13" fill="#1f8dd6" textLength="47.20" lengthAdjust="spacingAndGlyphs" >Zenpark</text><text x="1853.50" y="887.20" font-size="13" fill="#404040" text-anchor="end" textLength="73.00" lengthAdjust="spacingAndGlyphs" >06/04/2020</text><rect x="1074.2" y="909.2" width="10" height="11.5" fill="#a3a8cc"/><rect x="1083.2" y="907.2" width="5" height="13.5" rx="1" fill="#6a73a8"/><rect x="1075.5" y="911.2" width="1.8" height="1.8" fill="#fff"/><rect x="1078.5" y="911.2" width="1.8" height="1.8" fill="#fff"/><rect x="1081.5" y="911.2" width="1.8" height="1.8" fill="#fff"/><rect x="1075.5" y="914.4000000000001" width="1.8" height="1.8" fill="#fff"/><rect x="1078.5" y="914.4000000000001" width="1.8" height="1.8" fill="#fff"/><rect x="1081.5" y="914.4000000000001" width="1.8" height="1.8" fill="#fff"/><rect x="1075.5" y="917.6" width="1.8" height="1.8" fill="#fff"/><rect x="1078.5" y="917.6" width="1.8" height="1.8" fill="#fff"/><rect x="1081.5" y="917.6" width="1.8" height="1.8" fill="#fff"/><rect x="1084.2" y="910.2" width="3" height="1" fill="#c8cce0"/><rect x="1084.2" y="913.2" width="3" height="1" fill="#c8cce0"/><rect x="1084.2" y="916.2" width="3" height="1" fill="#c8cce0"/><text x="1092.80" y="917.20" font-size="13" fill="#1f8dd6" textLength="92.80" lengthAdjust="spacingAndGlyphs" >Green Company</text><text x="1853.50" y="917.20" font-size="13" fill="#404040" text-anchor="end" textLength="72.50" lengthAdjust="spacingAndGlyphs" >03/04/2020</text>
</svg>
</body></html>
